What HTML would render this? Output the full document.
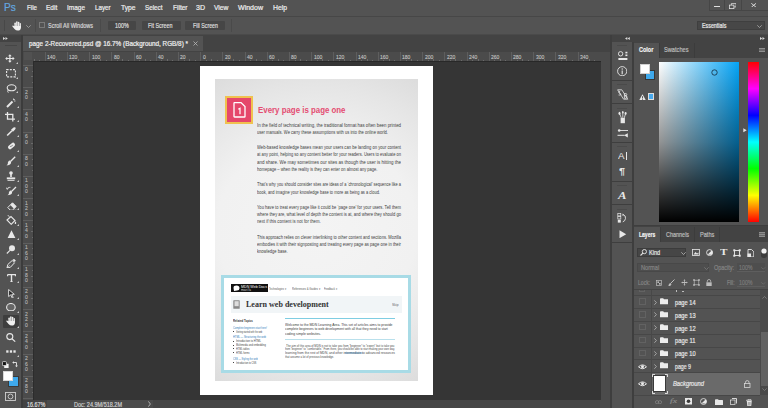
<!DOCTYPE html>
<html><head><meta charset="utf-8"><style>
html,body{margin:0;padding:0;width:768px;height:408px;overflow:hidden;background:#535353;}
body{position:relative;font-family:"Liberation Sans",sans-serif;}
div,span,svg{position:absolute;}
.t{white-space:nowrap;line-height:1;-webkit-text-stroke:0.2px currentColor;}
</style></head><body>

<div style="left:0.00px;top:0.00px;width:768.00px;height:15.50px;background:#535353;"></div>
<div style="left:0.00px;top:16.00px;width:768.00px;height:1.00px;background:#474747;"></div>
<span class="t" style="left:4.20px;top:2.12px;font-size:11.20px;color:#64a8e0;font-family:'Liberation Sans',sans-serif;transform:scaleX(0.9033);transform-origin:0 0;letter-spacing:0;">Ps</span>
<span class="t" style="left:26.80px;top:4.47px;font-size:7.00px;color:#eeeeee;font-family:'Liberation Sans',sans-serif;transform:scaleX(0.8864);transform-origin:0 0;">File</span>
<span class="t" style="left:46.30px;top:4.47px;font-size:7.00px;color:#eeeeee;font-family:'Liberation Sans',sans-serif;transform:scaleX(0.9285);transform-origin:0 0;">Edit</span>
<span class="t" style="left:67.00px;top:4.47px;font-size:7.00px;color:#eeeeee;font-family:'Liberation Sans',sans-serif;transform:scaleX(0.9246);transform-origin:0 0;">Image</span>
<span class="t" style="left:95.00px;top:4.47px;font-size:7.00px;color:#eeeeee;font-family:'Liberation Sans',sans-serif;transform:scaleX(0.8963);transform-origin:0 0;">Layer</span>
<span class="t" style="left:120.50px;top:4.47px;font-size:7.00px;color:#eeeeee;font-family:'Liberation Sans',sans-serif;transform:scaleX(0.9547);transform-origin:0 0;">Type</span>
<span class="t" style="left:144.50px;top:4.47px;font-size:7.00px;color:#eeeeee;font-family:'Liberation Sans',sans-serif;transform:scaleX(0.8989);transform-origin:0 0;">Select</span>
<span class="t" style="left:172.50px;top:4.47px;font-size:7.00px;color:#eeeeee;font-family:'Liberation Sans',sans-serif;transform:scaleX(0.9317);transform-origin:0 0;">Filter</span>
<span class="t" style="left:196.00px;top:4.47px;font-size:7.00px;color:#eeeeee;font-family:'Liberation Sans',sans-serif;transform:scaleX(1.0052);transform-origin:0 0;">3D</span>
<span class="t" style="left:214.00px;top:4.47px;font-size:7.00px;color:#eeeeee;font-family:'Liberation Sans',sans-serif;transform:scaleX(0.9570);transform-origin:0 0;">View</span>
<span class="t" style="left:238.40px;top:4.47px;font-size:7.00px;color:#eeeeee;font-family:'Liberation Sans',sans-serif;transform:scaleX(1.0038);transform-origin:0 0;">Window</span>
<span class="t" style="left:272.80px;top:4.47px;font-size:7.00px;color:#eeeeee;font-family:'Liberation Sans',sans-serif;transform:scaleX(0.9787);transform-origin:0 0;">Help</span>
<div style="left:709.00px;top:0.00px;width:0.80px;height:10.50px;background:#464646;"></div>
<div style="left:724.00px;top:0.00px;width:0.80px;height:10.50px;background:#464646;"></div>
<div style="left:741.00px;top:0.00px;width:0.80px;height:10.50px;background:#464646;"></div>
<div style="left:709.00px;top:10.20px;width:59.00px;height:0.80px;background:#464646;"></div>
<div style="left:713.80px;top:6.20px;width:6.20px;height:1.20px;background:#e0e0e0;"></div>
<svg style="left:728.7px;top:3px" width="7.5" height="6" viewBox="0 0 7.5 6"><rect x="0.4" y="2.1" width="4.5" height="3.5" fill="none" stroke="#e0e0e0" stroke-width="0.8"/><path d="M2.4 2.1V0.4H7.1V3.9H4.9" fill="none" stroke="#e0e0e0" stroke-width="0.8"/></svg>
<svg style="left:750.8px;top:2.8px" width="5.4" height="4.6" viewBox="0 0 5.4 4.6"><path d="M0.3 0.3L5.1 4.3M5.1 0.3L0.3 4.3" stroke="#e6e6e6" stroke-width="0.9"/></svg>
<div style="left:0.00px;top:17.00px;width:768.00px;height:17.30px;background:#535353;"></div>
<div style="left:0.00px;top:34.30px;width:768.00px;height:0.70px;background:#4a4a4a;"></div>
<div style="left:3.50px;top:20.00px;width:1.20px;height:11.00px;background:#484848;"></div>
<svg style="left:12px;top:21px" width="10" height="10" viewBox="0 0 10 10"><rect x="2.4" y="1.6" width="1.5" height="6" rx="0.75" fill="#f0f0f0"/><rect x="4.1" y="0.3" width="1.5" height="6" rx="0.75" fill="#f0f0f0"/><rect x="5.8" y="0.8" width="1.5" height="6" rx="0.75" fill="#f0f0f0"/><rect x="7.5" y="2" width="1.4" height="5" rx="0.7" fill="#f0f0f0"/><path d="M2.4 5H8.9V6.8Q8.9 9.6 5.8 9.6Q3.8 9.6 2.8 8.2L0.4 5.4Q0.1 4.6 0.9 4.5Q1.4 4.5 2.4 5.6Z" fill="#f0f0f0"/><path d="M3.95 2.5V5M5.65 1.5V5M7.35 2.5V5" stroke="#9a9a9a" stroke-width="0.25"/></svg>
<svg style="left:25.8px;top:25px" width="5" height="3" viewBox="0 0 5 3"><path d="M0.3 0.3L2.5 2.5L4.7 0.3" fill="none" stroke="#a8a8a8" stroke-width="0.8"/></svg>
<div style="left:35.20px;top:19.00px;width:0.80px;height:13.00px;background:#4a4a4a;"></div>
<div style="left:38.80px;top:22.40px;width:6.30px;height:6.10px;background:transparent;border:1px solid #7a7a7a;box-sizing:border-box;"></div>
<span class="t" style="left:48.00px;top:23.26px;font-size:6.90px;color:#d6d6d6;font-family:'Liberation Sans',sans-serif;transform:scaleX(0.7993);transform-origin:0 0;">Scroll All Windows</span>
<div style="left:100.00px;top:19.00px;width:0.80px;height:13.00px;background:#4a4a4a;"></div>
<div style="left:230.70px;top:19.00px;width:0.80px;height:13.00px;background:#4a4a4a;"></div>
<div style="left:107.80px;top:21.00px;width:28.40px;height:9.40px;background:#464646;border-radius:1px;"></div>
<span class="t" style="left:115.00px;top:23.31px;font-size:6.60px;color:#dedede;font-family:'Liberation Sans',sans-serif;transform:scaleX(0.8178);transform-origin:0 0;">100%</span>
<div style="left:142.00px;top:21.00px;width:38.50px;height:9.40px;background:#464646;border-radius:1px;"></div>
<span class="t" style="left:148.30px;top:23.31px;font-size:6.60px;color:#dedede;font-family:'Liberation Sans',sans-serif;transform:scaleX(0.8183);transform-origin:0 0;">Fit Screen</span>
<div style="left:185.30px;top:21.00px;width:40.00px;height:9.40px;background:#464646;border-radius:1px;"></div>
<span class="t" style="left:193.00px;top:23.31px;font-size:6.60px;color:#dedede;font-family:'Liberation Sans',sans-serif;transform:scaleX(0.8024);transform-origin:0 0;">Fill Screen</span>
<div style="left:697.00px;top:21.00px;width:67.50px;height:9.20px;background:#474747;border:0.8px solid #3f3f3f;box-sizing:border-box;"></div>
<span class="t" style="left:701.70px;top:22.27px;font-size:7.00px;color:#ececec;font-family:'Liberation Sans',sans-serif;transform:scaleX(0.7616);transform-origin:0 0;">Essentials</span>
<svg style="left:757px;top:24.5px" width="5" height="3" viewBox="0 0 5 3"><path d="M0.3 0.3L2.5 2.5L4.7 0.3" fill="none" stroke="#b0b0b0" stroke-width="0.8"/></svg>
<div style="left:0.00px;top:35.00px;width:21.30px;height:373.00px;background:#535353;"></div>
<div style="left:0.00px;top:35.00px;width:21.30px;height:6.80px;background:#434343;"></div>
<svg style="left:3.00px;top:37.20px" width="4.8" height="2.9" viewBox="0 0 4.8 2.9"><path d="M0 0V2.9L2.3 1.45Z M2.5 0V2.9L4.8 1.45Z" fill="#d8d8d8"/></svg>
<div style="left:4.50px;top:44.80px;width:12.00px;height:0.80px;background:#464646;"></div>
<div style="left:21.30px;top:35.00px;width:1.70px;height:373.00px;background:#3c3c3c;"></div>
<svg style="left:5.40px;top:54.30px" width="9.8" height="9" viewBox="0 0 9.8 9"><path d="M4.9 0.2L6.7 2.2H5.5V3.9H7.6V2.7L9.6 4.5L7.6 6.3V5.1H5.5V6.8H6.7L4.9 8.8L3.1 6.8H4.3V5.1H2.2V6.3L0.2 4.5L2.2 2.7V3.9H4.3V2.2H3.1Z" fill="#e8e8e8"/></svg>
<svg style="left:16.00px;top:62.00px" width="2" height="2" viewBox="0 0 2 2"><path d="M2 0V2H0Z" fill="#c8c8c8"/></svg>
<svg style="left:6.00px;top:69.00px" width="10" height="8.5" viewBox="0 0 10 8.5"><rect x="0.6" y="0.6" width="8.8" height="7.3" fill="none" stroke="#e8e8e8" stroke-width="1.1" stroke-dasharray="2 1.2"/></svg>
<svg style="left:16.00px;top:76.50px" width="2" height="2" viewBox="0 0 2 2"><path d="M2 0V2H0Z" fill="#c8c8c8"/></svg>
<svg style="left:6.00px;top:83.50px" width="10.5" height="9" viewBox="0 0 10.5 9"><ellipse cx="5.6" cy="3.8" rx="4.4" ry="3" fill="none" stroke="#e8e8e8" stroke-width="1.1"/><path d="M2.2 6 Q1.2 7.5 2.3 8.6" fill="none" stroke="#e8e8e8" stroke-width="1"/></svg>
<svg style="left:16.00px;top:91.00px" width="2" height="2" viewBox="0 0 2 2"><path d="M2 0V2H0Z" fill="#c8c8c8"/></svg>
<svg style="left:6.00px;top:97.80px" width="10" height="10" viewBox="0 0 10 10"><path d="M1 9L6.5 3.5" stroke="#e8e8e8" stroke-width="2"/><path d="M7.5 0.5V2M8.8 1.2L7.8 2.2M9.5 3H8" stroke="#e8e8e8" stroke-width="0.8"/></svg>
<svg style="left:16.50px;top:105.50px" width="2" height="2" viewBox="0 0 2 2"><path d="M2 0V2H0Z" fill="#c8c8c8"/></svg>
<svg style="left:5.00px;top:112.00px" width="10.5" height="9.5" viewBox="0 0 10.5 9.5"><path d="M2.5 0V7.2H10M0 2.3H7.8V9.5" fill="none" stroke="#e8e8e8" stroke-width="1.3"/></svg>
<svg style="left:16.50px;top:120.00px" width="2" height="2" viewBox="0 0 2 2"><path d="M2 0V2H0Z" fill="#c8c8c8"/></svg>
<svg style="left:6.00px;top:127.00px" width="10" height="9.5" viewBox="0 0 10 9.5"><path d="M1.2 8.5L6 3.7" stroke="#e8e8e8" stroke-width="1.6"/><path d="M5 2.7L7.5 0.6Q8.8 -0.2 9.4 0.6Q10 1.3 9.1 2.4L7 4.8Z" fill="#e8e8e8"/></svg>
<svg style="left:16.50px;top:135.00px" width="2" height="2" viewBox="0 0 2 2"><path d="M2 0V2H0Z" fill="#c8c8c8"/></svg>
<svg style="left:5.80px;top:141.00px" width="10.5" height="10" viewBox="0 0 10.5 10"><rect x="1.5" y="3" width="8" height="4" rx="2" transform="rotate(-40 5.5 5)" fill="#e8e8e8"/><circle cx="5.5" cy="5" r="0.6" fill="#777"/><circle cx="4.5" cy="5.5" r="0.5" fill="#777"/><circle cx="6.4" cy="4.3" r="0.5" fill="#777"/></svg>
<svg style="left:17.00px;top:150.00px" width="2" height="2" viewBox="0 0 2 2"><path d="M2 0V2H0Z" fill="#c8c8c8"/></svg>
<svg style="left:6.00px;top:156.00px" width="10" height="10" viewBox="0 0 10 10"><path d="M4.5 5.5L9.2 0.8" stroke="#e8e8e8" stroke-width="1.3"/><path d="M4.8 5.2Q3.6 4 2.5 5.2Q1.6 6.3 1.8 8 Q0.8 9.2 0.6 9.5Q3.5 9.3 4.5 8Q5.6 6.6 4.8 5.2Z" fill="#e8e8e8"/></svg>
<svg style="left:17.00px;top:165.00px" width="2" height="2" viewBox="0 0 2 2"><path d="M2 0V2H0Z" fill="#c8c8c8"/></svg>
<svg style="left:6.00px;top:170.80px" width="10" height="10" viewBox="0 0 10 10"><circle cx="5" cy="2" r="1.8" fill="#e8e8e8"/><rect x="4.2" y="3" width="1.6" height="3" fill="#e8e8e8"/><path d="M0.8 6.4H9.2V8.2H0.8Z" fill="#e8e8e8"/><rect x="1.5" y="8.8" width="7" height="1" fill="#e8e8e8"/></svg>
<svg style="left:17.00px;top:179.50px" width="2" height="2" viewBox="0 0 2 2"><path d="M2 0V2H0Z" fill="#c8c8c8"/></svg>
<svg style="left:5.50px;top:186.00px" width="11" height="9.5" viewBox="0 0 11 9.5"><path d="M5.5 5.5L10 1" stroke="#e8e8e8" stroke-width="1.3"/><path d="M5.8 5.2Q4.6 4 3.5 5.2Q2.6 6.3 2.8 8 Q1.8 9 1.6 9.3Q4.5 9.1 5.5 8Q6.6 6.6 5.8 5.2Z" fill="#e8e8e8"/><path d="M0.8 3Q2 0.8 4.5 1.3" fill="none" stroke="#e8e8e8" stroke-width="0.8"/><path d="M0.3 1.5L1 3.4L2.6 2.4" fill="none" stroke="#e8e8e8" stroke-width="0.7"/></svg>
<svg style="left:17.00px;top:193.50px" width="2" height="2" viewBox="0 0 2 2"><path d="M2 0V2H0Z" fill="#c8c8c8"/></svg>
<svg style="left:6.50px;top:201.50px" width="10" height="8.5" viewBox="0 0 10 8.5"><path d="M0.8 5.5L5.5 0.8L9.2 4.5L5.4 8.2H3.3Z" fill="none" stroke="#e8e8e8" stroke-width="1"/><path d="M3.2 3.2L7 7" stroke="#e8e8e8" stroke-width="0"/><path d="M3.3 3L5.5 0.8L9.2 4.5L7 6.7Z" fill="#e8e8e8"/><path d="M5.4 8.2H9.5" stroke="#e8e8e8" stroke-width="0.7"/></svg>
<svg style="left:17.00px;top:208.00px" width="2" height="2" viewBox="0 0 2 2"><path d="M2 0V2H0Z" fill="#c8c8c8"/></svg>
<svg style="left:5.50px;top:214.50px" width="11.5" height="10.5" viewBox="0 0 11.5 10.5"><path d="M1 5L5 1.5L9 5.5L5.2 9.3Z" fill="none" stroke="#e8e8e8" stroke-width="1.1"/><path d="M3.5 1.5L1.6 0.3" stroke="#e8e8e8" stroke-width="0.9"/><path d="M9.5 6.2Q10.8 8 10 8.8Q9.2 9.5 8.7 8.5Q8.5 7.5 9.5 6.2Z" fill="#e8e8e8"/></svg>
<svg style="left:17.00px;top:223.50px" width="2" height="2" viewBox="0 0 2 2"><path d="M2 0V2H0Z" fill="#c8c8c8"/></svg>
<svg style="left:6.50px;top:229.80px" width="9" height="8.5" viewBox="0 0 9 8.5"><path d="M4.5 0.3L8.5 8.2H0.5Z" fill="#e8e8e8"/></svg>
<svg style="left:17.00px;top:237.50px" width="2" height="2" viewBox="0 0 2 2"><path d="M2 0V2H0Z" fill="#c8c8c8"/></svg>
<svg style="left:6.00px;top:244.50px" width="10" height="9" viewBox="0 0 10 9"><circle cx="6" cy="3.2" r="3" fill="#e8e8e8"/><path d="M4 5.3L0.8 8.5" stroke="#e8e8e8" stroke-width="1.1"/></svg>
<svg style="left:17.00px;top:252.50px" width="2" height="2" viewBox="0 0 2 2"><path d="M2 0V2H0Z" fill="#c8c8c8"/></svg>
<svg style="left:6.00px;top:258.80px" width="10" height="9.5" viewBox="0 0 10 9.5"><path d="M1 9L1.8 5.5L6.2 1.5L8.5 3.8L4.5 8.2Z" fill="none" stroke="#e8e8e8" stroke-width="1"/><path d="M6.5 1L8 -0.2L9.8 1.6L8.8 3" fill="#e8e8e8"/><path d="M1 9L3.8 6.3" stroke="#e8e8e8" stroke-width="0.6"/></svg>
<svg style="left:17.00px;top:267.00px" width="2" height="2" viewBox="0 0 2 2"><path d="M2 0V2H0Z" fill="#c8c8c8"/></svg>
<svg style="left:6.50px;top:273.50px" width="9" height="8.5" viewBox="0 0 9 8.5"><path d="M0.6 0.6H8.4V2.2" fill="none" stroke="#e8e8e8" stroke-width="1.1"/><path d="M0.6 2.2V0.6" stroke="#e8e8e8" stroke-width="1.1"/><path d="M4.5 0.6V8" stroke="#e8e8e8" stroke-width="1.4"/><path d="M3 8H6" stroke="#e8e8e8" stroke-width="0.9"/></svg>
<svg style="left:17.00px;top:281.00px" width="2" height="2" viewBox="0 0 2 2"><path d="M2 0V2H0Z" fill="#c8c8c8"/></svg>
<svg style="left:8.00px;top:288.50px" width="7" height="9.5" viewBox="0 0 7 9.5"><path d="M0.6 0.5L6.3 5.3H3.8L5.2 8.6L4.2 9L2.8 5.8L0.6 7.6Z" fill="#2a2a2a" stroke="#e8e8e8" stroke-width="0.9"/></svg>
<svg style="left:17.00px;top:296.50px" width="2" height="2" viewBox="0 0 2 2"><path d="M2 0V2H0Z" fill="#c8c8c8"/></svg>
<svg style="left:5.80px;top:302.80px" width="9.8" height="8.4" viewBox="0 0 9.8 8.4"><ellipse cx="4.9" cy="4.2" rx="4.3" ry="3.7" fill="#666" stroke="#e8e8e8" stroke-width="1.1"/></svg>
<svg style="left:17.00px;top:310.80px" width="2" height="2" viewBox="0 0 2 2"><path d="M2 0V2H0Z" fill="#c8c8c8"/></svg>
<div style="left:2.50px;top:314.80px;width:16.50px;height:13.20px;background:#3e3e3e;border-radius:1px;"></div>
<svg style="left:5.80px;top:316.20px" width="10" height="10" viewBox="0 0 10 10"><rect x="2.4" y="1.6" width="1.5" height="6" rx="0.75" fill="#f0f0f0"/><rect x="4.1" y="0.3" width="1.5" height="6" rx="0.75" fill="#f0f0f0"/><rect x="5.8" y="0.8" width="1.5" height="6" rx="0.75" fill="#f0f0f0"/><rect x="7.5" y="2" width="1.4" height="5" rx="0.7" fill="#f0f0f0"/><path d="M2.4 5H8.9V6.8Q8.9 9.6 5.8 9.6Q3.8 9.6 2.8 8.2L0.4 5.4Q0.1 4.6 0.9 4.5Q1.4 4.5 2.4 5.6Z" fill="#f0f0f0"/><path d="M3.95 2.5V5M5.65 1.5V5M7.35 2.5V5" stroke="#9a9a9a" stroke-width="0.25"/></svg>
<svg style="left:17.00px;top:325.50px" width="2" height="2" viewBox="0 0 2 2"><path d="M2 0V2H0Z" fill="#c8c8c8"/></svg>
<svg style="left:5.80px;top:332.80px" width="10" height="9" viewBox="0 0 10 9"><circle cx="3.8" cy="3.6" r="3" fill="none" stroke="#e8e8e8" stroke-width="1.1"/><path d="M6 5.8L9.2 8.6" stroke="#e8e8e8" stroke-width="1.2"/></svg>
<svg style="left:6.00px;top:349.60px" width="10" height="3.2" viewBox="0 0 10 3.2"><rect x="0.2" y="0.3" width="2.3" height="2.4" fill="#e8e8e8"/><rect x="3.8" y="0.3" width="2.3" height="2.4" fill="#e8e8e8"/><rect x="7.4" y="0.3" width="2.3" height="2.4" fill="#e8e8e8"/></svg>
<svg style="left:17.00px;top:354.50px" width="2" height="2" viewBox="0 0 2 2"><path d="M2 0V2H0Z" fill="#c8c8c8"/></svg>
<svg style="left:1.80px;top:360.80px" width="7" height="7.5" viewBox="0 0 7 7.5"><rect x="2.2" y="2.8" width="4.4" height="4.4" fill="#f2f2f2"/><rect x="0.4" y="0.6" width="4" height="4" rx="0.8" fill="#111" stroke="#e8e8e8" stroke-width="0.8"/></svg>
<svg style="left:12.00px;top:360.80px" width="7" height="7" viewBox="0 0 7 7"><path d="M1.6 1.5H4.5V4.8" fill="none" stroke="#e8e8e8" stroke-width="0.9"/><path d="M0.2 1.5L2 0.2V2.8Z" fill="#e8e8e8"/><path d="M3.1 4.4H5.9L4.5 6.3Z" fill="#e8e8e8"/></svg>
<div style="left:8.00px;top:376.20px;width:11.00px;height:10.40px;background:#3fa9ec;border:0.7px solid #3a3a3a;box-sizing:border-box;"></div>
<div style="left:2.70px;top:370.70px;width:10.50px;height:10.40px;background:#ffffff;border:0.5px solid #d8d8d8;box-sizing:border-box;"></div>
<svg style="left:5.00px;top:391.50px" width="11" height="9" viewBox="0 0 11 9"><rect x="0.5" y="0.5" width="10" height="8" fill="none" stroke="#cfcfcf" stroke-width="0.9"/><circle cx="5.5" cy="4.5" r="2.4" fill="none" stroke="#cfcfcf" stroke-width="0.9"/></svg>
<div style="left:23.00px;top:35.00px;width:588.00px;height:16.80px;background:#434343;"></div>
<div style="left:23.00px;top:35.90px;width:179.70px;height:14.70px;background:#535353;"></div>
<span class="t" style="left:28.80px;top:41.36px;font-size:6.90px;color:#f0f0f0;font-family:'Liberation Sans',sans-serif;transform:scaleX(0.9219);transform-origin:0 0;">page 2-Recovered.psd @ 16.7% (Background, RGB/8) *</span>
<svg style="left:192.6px;top:41px" width="5" height="5" viewBox="0 0 5 5"><path d="M0.5 0.5L4.5 4.5M4.5 0.5L0.5 4.5" stroke="#b8b8b8" stroke-width="0.8"/></svg>
<div style="left:23.00px;top:51.80px;width:577.50px;height:9.00px;background:#4b4b4b;"></div>
<div style="left:23.00px;top:60.80px;width:9.60px;height:339.00px;background:#4b4b4b;"></div>
<div style="left:23.60px;top:52.40px;width:8.60px;height:8.00px;background:#515151;"></div>
<div style="left:33.00px;top:61.00px;width:567.50px;height:338.50px;background:#353535;"></div>
<div style="left:32.60px;top:60.60px;width:568.00px;height:0.90px;background:#282828;"></div>
<div style="left:32.60px;top:60.60px;width:0.90px;height:339.00px;background:#2c2c2c;"></div>
<div style="left:44.70px;top:51.80px;width:0.80px;height:9.00px;background:#5e5e5e;"></div>
<span class="t" style="left:47.10px;top:54.80px;font-size:10.40px;color:#c4c4c4;font-family:'Liberation Sans',sans-serif;transform:scale(0.4843,0.5000);transform-origin:0 0;">140</span>
<div style="left:66.90px;top:51.80px;width:0.80px;height:9.00px;background:#5e5e5e;"></div>
<span class="t" style="left:69.30px;top:54.80px;font-size:10.40px;color:#c4c4c4;font-family:'Liberation Sans',sans-serif;transform:scale(0.4843,0.5000);transform-origin:0 0;">120</span>
<div style="left:89.10px;top:51.80px;width:0.80px;height:9.00px;background:#5e5e5e;"></div>
<span class="t" style="left:91.50px;top:54.80px;font-size:10.40px;color:#c4c4c4;font-family:'Liberation Sans',sans-serif;transform:scale(0.4843,0.5000);transform-origin:0 0;">100</span>
<div style="left:111.30px;top:51.80px;width:0.80px;height:9.00px;background:#5e5e5e;"></div>
<span class="t" style="left:113.70px;top:54.80px;font-size:10.40px;color:#c4c4c4;font-family:'Liberation Sans',sans-serif;transform:scale(0.4843,0.5000);transform-origin:0 0;">80</span>
<div style="left:133.50px;top:51.80px;width:0.80px;height:9.00px;background:#5e5e5e;"></div>
<span class="t" style="left:135.90px;top:54.80px;font-size:10.40px;color:#c4c4c4;font-family:'Liberation Sans',sans-serif;transform:scale(0.4843,0.5000);transform-origin:0 0;">60</span>
<div style="left:155.70px;top:51.80px;width:0.80px;height:9.00px;background:#5e5e5e;"></div>
<span class="t" style="left:158.10px;top:54.80px;font-size:10.40px;color:#c4c4c4;font-family:'Liberation Sans',sans-serif;transform:scale(0.4843,0.5000);transform-origin:0 0;">40</span>
<div style="left:177.90px;top:51.80px;width:0.80px;height:9.00px;background:#5e5e5e;"></div>
<span class="t" style="left:180.30px;top:54.80px;font-size:10.40px;color:#c4c4c4;font-family:'Liberation Sans',sans-serif;transform:scale(0.4843,0.5000);transform-origin:0 0;">20</span>
<div style="left:200.10px;top:51.80px;width:0.80px;height:9.00px;background:#5e5e5e;"></div>
<span class="t" style="left:202.50px;top:54.80px;font-size:10.40px;color:#c4c4c4;font-family:'Liberation Sans',sans-serif;transform:scale(0.4843,0.5000);transform-origin:0 0;">0</span>
<div style="left:222.30px;top:51.80px;width:0.80px;height:9.00px;background:#5e5e5e;"></div>
<span class="t" style="left:224.70px;top:54.80px;font-size:10.40px;color:#c4c4c4;font-family:'Liberation Sans',sans-serif;transform:scale(0.4843,0.5000);transform-origin:0 0;">20</span>
<div style="left:244.50px;top:51.80px;width:0.80px;height:9.00px;background:#5e5e5e;"></div>
<span class="t" style="left:246.90px;top:54.80px;font-size:10.40px;color:#c4c4c4;font-family:'Liberation Sans',sans-serif;transform:scale(0.4843,0.5000);transform-origin:0 0;">40</span>
<div style="left:266.70px;top:51.80px;width:0.80px;height:9.00px;background:#5e5e5e;"></div>
<span class="t" style="left:269.10px;top:54.80px;font-size:10.40px;color:#c4c4c4;font-family:'Liberation Sans',sans-serif;transform:scale(0.4843,0.5000);transform-origin:0 0;">60</span>
<div style="left:288.90px;top:51.80px;width:0.80px;height:9.00px;background:#5e5e5e;"></div>
<span class="t" style="left:291.30px;top:54.80px;font-size:10.40px;color:#c4c4c4;font-family:'Liberation Sans',sans-serif;transform:scale(0.4843,0.5000);transform-origin:0 0;">80</span>
<div style="left:311.10px;top:51.80px;width:0.80px;height:9.00px;background:#5e5e5e;"></div>
<span class="t" style="left:313.50px;top:54.80px;font-size:10.40px;color:#c4c4c4;font-family:'Liberation Sans',sans-serif;transform:scale(0.4843,0.5000);transform-origin:0 0;">100</span>
<div style="left:333.30px;top:51.80px;width:0.80px;height:9.00px;background:#5e5e5e;"></div>
<span class="t" style="left:335.70px;top:54.80px;font-size:10.40px;color:#c4c4c4;font-family:'Liberation Sans',sans-serif;transform:scale(0.4843,0.5000);transform-origin:0 0;">120</span>
<div style="left:355.50px;top:51.80px;width:0.80px;height:9.00px;background:#5e5e5e;"></div>
<span class="t" style="left:357.90px;top:54.80px;font-size:10.40px;color:#c4c4c4;font-family:'Liberation Sans',sans-serif;transform:scale(0.4843,0.5000);transform-origin:0 0;">140</span>
<div style="left:377.70px;top:51.80px;width:0.80px;height:9.00px;background:#5e5e5e;"></div>
<span class="t" style="left:380.10px;top:54.80px;font-size:10.40px;color:#c4c4c4;font-family:'Liberation Sans',sans-serif;transform:scale(0.4843,0.5000);transform-origin:0 0;">160</span>
<div style="left:399.90px;top:51.80px;width:0.80px;height:9.00px;background:#5e5e5e;"></div>
<span class="t" style="left:402.30px;top:54.80px;font-size:10.40px;color:#c4c4c4;font-family:'Liberation Sans',sans-serif;transform:scale(0.4843,0.5000);transform-origin:0 0;">180</span>
<div style="left:422.10px;top:51.80px;width:0.80px;height:9.00px;background:#5e5e5e;"></div>
<span class="t" style="left:424.50px;top:54.80px;font-size:10.40px;color:#c4c4c4;font-family:'Liberation Sans',sans-serif;transform:scale(0.4843,0.5000);transform-origin:0 0;">200</span>
<div style="left:444.30px;top:51.80px;width:0.80px;height:9.00px;background:#5e5e5e;"></div>
<span class="t" style="left:446.70px;top:54.80px;font-size:10.40px;color:#c4c4c4;font-family:'Liberation Sans',sans-serif;transform:scale(0.4843,0.5000);transform-origin:0 0;">220</span>
<div style="left:466.50px;top:51.80px;width:0.80px;height:9.00px;background:#5e5e5e;"></div>
<span class="t" style="left:468.90px;top:54.80px;font-size:10.40px;color:#c4c4c4;font-family:'Liberation Sans',sans-serif;transform:scale(0.4843,0.5000);transform-origin:0 0;">240</span>
<div style="left:488.70px;top:51.80px;width:0.80px;height:9.00px;background:#5e5e5e;"></div>
<span class="t" style="left:491.10px;top:54.80px;font-size:10.40px;color:#c4c4c4;font-family:'Liberation Sans',sans-serif;transform:scale(0.4843,0.5000);transform-origin:0 0;">260</span>
<div style="left:510.90px;top:51.80px;width:0.80px;height:9.00px;background:#5e5e5e;"></div>
<span class="t" style="left:513.30px;top:54.80px;font-size:10.40px;color:#c4c4c4;font-family:'Liberation Sans',sans-serif;transform:scale(0.4843,0.5000);transform-origin:0 0;">280</span>
<div style="left:533.10px;top:51.80px;width:0.80px;height:9.00px;background:#5e5e5e;"></div>
<span class="t" style="left:535.50px;top:54.80px;font-size:10.40px;color:#c4c4c4;font-family:'Liberation Sans',sans-serif;transform:scale(0.4843,0.5000);transform-origin:0 0;">300</span>
<div style="left:555.30px;top:51.80px;width:0.80px;height:9.00px;background:#5e5e5e;"></div>
<span class="t" style="left:557.70px;top:54.80px;font-size:10.40px;color:#c4c4c4;font-family:'Liberation Sans',sans-serif;transform:scale(0.4843,0.5000);transform-origin:0 0;">320</span>
<div style="left:577.50px;top:51.80px;width:0.80px;height:9.00px;background:#5e5e5e;"></div>
<span class="t" style="left:579.90px;top:54.80px;font-size:10.40px;color:#c4c4c4;font-family:'Liberation Sans',sans-serif;transform:scale(0.4843,0.5000);transform-origin:0 0;">340</span>
<div style="left:33.65px;top:59.10px;width:0.70px;height:1.60px;background:#6a6a6a;"></div>
<div style="left:39.20px;top:59.60px;width:0.70px;height:1.10px;background:#6a6a6a;"></div>
<div style="left:50.30px;top:59.60px;width:0.70px;height:1.10px;background:#6a6a6a;"></div>
<div style="left:55.85px;top:59.10px;width:0.70px;height:1.60px;background:#6a6a6a;"></div>
<div style="left:61.40px;top:59.60px;width:0.70px;height:1.10px;background:#6a6a6a;"></div>
<div style="left:72.50px;top:59.60px;width:0.70px;height:1.10px;background:#6a6a6a;"></div>
<div style="left:78.05px;top:59.10px;width:0.70px;height:1.60px;background:#6a6a6a;"></div>
<div style="left:83.60px;top:59.60px;width:0.70px;height:1.10px;background:#6a6a6a;"></div>
<div style="left:94.70px;top:59.60px;width:0.70px;height:1.10px;background:#6a6a6a;"></div>
<div style="left:100.25px;top:59.10px;width:0.70px;height:1.60px;background:#6a6a6a;"></div>
<div style="left:105.80px;top:59.60px;width:0.70px;height:1.10px;background:#6a6a6a;"></div>
<div style="left:116.90px;top:59.60px;width:0.70px;height:1.10px;background:#6a6a6a;"></div>
<div style="left:122.45px;top:59.10px;width:0.70px;height:1.60px;background:#6a6a6a;"></div>
<div style="left:128.00px;top:59.60px;width:0.70px;height:1.10px;background:#6a6a6a;"></div>
<div style="left:139.10px;top:59.60px;width:0.70px;height:1.10px;background:#6a6a6a;"></div>
<div style="left:144.65px;top:59.10px;width:0.70px;height:1.60px;background:#6a6a6a;"></div>
<div style="left:150.20px;top:59.60px;width:0.70px;height:1.10px;background:#6a6a6a;"></div>
<div style="left:161.30px;top:59.60px;width:0.70px;height:1.10px;background:#6a6a6a;"></div>
<div style="left:166.85px;top:59.10px;width:0.70px;height:1.60px;background:#6a6a6a;"></div>
<div style="left:172.40px;top:59.60px;width:0.70px;height:1.10px;background:#6a6a6a;"></div>
<div style="left:183.50px;top:59.60px;width:0.70px;height:1.10px;background:#6a6a6a;"></div>
<div style="left:189.05px;top:59.10px;width:0.70px;height:1.60px;background:#6a6a6a;"></div>
<div style="left:194.60px;top:59.60px;width:0.70px;height:1.10px;background:#6a6a6a;"></div>
<div style="left:205.70px;top:59.60px;width:0.70px;height:1.10px;background:#6a6a6a;"></div>
<div style="left:211.25px;top:59.10px;width:0.70px;height:1.60px;background:#6a6a6a;"></div>
<div style="left:216.80px;top:59.60px;width:0.70px;height:1.10px;background:#6a6a6a;"></div>
<div style="left:227.90px;top:59.60px;width:0.70px;height:1.10px;background:#6a6a6a;"></div>
<div style="left:233.45px;top:59.10px;width:0.70px;height:1.60px;background:#6a6a6a;"></div>
<div style="left:239.00px;top:59.60px;width:0.70px;height:1.10px;background:#6a6a6a;"></div>
<div style="left:250.10px;top:59.60px;width:0.70px;height:1.10px;background:#6a6a6a;"></div>
<div style="left:255.65px;top:59.10px;width:0.70px;height:1.60px;background:#6a6a6a;"></div>
<div style="left:261.20px;top:59.60px;width:0.70px;height:1.10px;background:#6a6a6a;"></div>
<div style="left:272.30px;top:59.60px;width:0.70px;height:1.10px;background:#6a6a6a;"></div>
<div style="left:277.85px;top:59.10px;width:0.70px;height:1.60px;background:#6a6a6a;"></div>
<div style="left:283.40px;top:59.60px;width:0.70px;height:1.10px;background:#6a6a6a;"></div>
<div style="left:294.50px;top:59.60px;width:0.70px;height:1.10px;background:#6a6a6a;"></div>
<div style="left:300.05px;top:59.10px;width:0.70px;height:1.60px;background:#6a6a6a;"></div>
<div style="left:305.60px;top:59.60px;width:0.70px;height:1.10px;background:#6a6a6a;"></div>
<div style="left:316.70px;top:59.60px;width:0.70px;height:1.10px;background:#6a6a6a;"></div>
<div style="left:322.25px;top:59.10px;width:0.70px;height:1.60px;background:#6a6a6a;"></div>
<div style="left:327.80px;top:59.60px;width:0.70px;height:1.10px;background:#6a6a6a;"></div>
<div style="left:338.90px;top:59.60px;width:0.70px;height:1.10px;background:#6a6a6a;"></div>
<div style="left:344.45px;top:59.10px;width:0.70px;height:1.60px;background:#6a6a6a;"></div>
<div style="left:350.00px;top:59.60px;width:0.70px;height:1.10px;background:#6a6a6a;"></div>
<div style="left:361.10px;top:59.60px;width:0.70px;height:1.10px;background:#6a6a6a;"></div>
<div style="left:366.65px;top:59.10px;width:0.70px;height:1.60px;background:#6a6a6a;"></div>
<div style="left:372.20px;top:59.60px;width:0.70px;height:1.10px;background:#6a6a6a;"></div>
<div style="left:383.30px;top:59.60px;width:0.70px;height:1.10px;background:#6a6a6a;"></div>
<div style="left:388.85px;top:59.10px;width:0.70px;height:1.60px;background:#6a6a6a;"></div>
<div style="left:394.40px;top:59.60px;width:0.70px;height:1.10px;background:#6a6a6a;"></div>
<div style="left:405.50px;top:59.60px;width:0.70px;height:1.10px;background:#6a6a6a;"></div>
<div style="left:411.05px;top:59.10px;width:0.70px;height:1.60px;background:#6a6a6a;"></div>
<div style="left:416.60px;top:59.60px;width:0.70px;height:1.10px;background:#6a6a6a;"></div>
<div style="left:427.70px;top:59.60px;width:0.70px;height:1.10px;background:#6a6a6a;"></div>
<div style="left:433.25px;top:59.10px;width:0.70px;height:1.60px;background:#6a6a6a;"></div>
<div style="left:438.80px;top:59.60px;width:0.70px;height:1.10px;background:#6a6a6a;"></div>
<div style="left:449.90px;top:59.60px;width:0.70px;height:1.10px;background:#6a6a6a;"></div>
<div style="left:455.45px;top:59.10px;width:0.70px;height:1.60px;background:#6a6a6a;"></div>
<div style="left:461.00px;top:59.60px;width:0.70px;height:1.10px;background:#6a6a6a;"></div>
<div style="left:472.10px;top:59.60px;width:0.70px;height:1.10px;background:#6a6a6a;"></div>
<div style="left:477.65px;top:59.10px;width:0.70px;height:1.60px;background:#6a6a6a;"></div>
<div style="left:483.20px;top:59.60px;width:0.70px;height:1.10px;background:#6a6a6a;"></div>
<div style="left:494.30px;top:59.60px;width:0.70px;height:1.10px;background:#6a6a6a;"></div>
<div style="left:499.85px;top:59.10px;width:0.70px;height:1.60px;background:#6a6a6a;"></div>
<div style="left:505.40px;top:59.60px;width:0.70px;height:1.10px;background:#6a6a6a;"></div>
<div style="left:516.50px;top:59.60px;width:0.70px;height:1.10px;background:#6a6a6a;"></div>
<div style="left:522.05px;top:59.10px;width:0.70px;height:1.60px;background:#6a6a6a;"></div>
<div style="left:527.60px;top:59.60px;width:0.70px;height:1.10px;background:#6a6a6a;"></div>
<div style="left:538.70px;top:59.60px;width:0.70px;height:1.10px;background:#6a6a6a;"></div>
<div style="left:544.25px;top:59.10px;width:0.70px;height:1.60px;background:#6a6a6a;"></div>
<div style="left:549.80px;top:59.60px;width:0.70px;height:1.10px;background:#6a6a6a;"></div>
<div style="left:560.90px;top:59.60px;width:0.70px;height:1.10px;background:#6a6a6a;"></div>
<div style="left:566.45px;top:59.10px;width:0.70px;height:1.60px;background:#6a6a6a;"></div>
<div style="left:572.00px;top:59.60px;width:0.70px;height:1.10px;background:#6a6a6a;"></div>
<div style="left:583.10px;top:59.60px;width:0.70px;height:1.10px;background:#6a6a6a;"></div>
<div style="left:588.65px;top:59.10px;width:0.70px;height:1.60px;background:#6a6a6a;"></div>
<div style="left:594.20px;top:59.60px;width:0.70px;height:1.10px;background:#6a6a6a;"></div>
<div style="left:23.00px;top:64.90px;width:9.60px;height:0.80px;background:#5e5e5e;"></div>
<span class="t" style="left:24.60px;top:67.40px;font-size:10.40px;color:#b8b8b8;font-family:'Liberation Sans',sans-serif;transform:scale(0.4843,0.5000);transform-origin:0 0;">0</span>
<div style="left:23.00px;top:87.10px;width:9.60px;height:0.80px;background:#5e5e5e;"></div>
<span class="t" style="left:24.60px;top:89.60px;font-size:10.40px;color:#b8b8b8;font-family:'Liberation Sans',sans-serif;transform:scale(0.4843,0.5000);transform-origin:0 0;">2</span>
<span class="t" style="left:24.60px;top:95.10px;font-size:10.40px;color:#b8b8b8;font-family:'Liberation Sans',sans-serif;transform:scale(0.4843,0.5000);transform-origin:0 0;">0</span>
<div style="left:23.00px;top:109.30px;width:9.60px;height:0.80px;background:#5e5e5e;"></div>
<span class="t" style="left:24.60px;top:111.80px;font-size:10.40px;color:#b8b8b8;font-family:'Liberation Sans',sans-serif;transform:scale(0.4843,0.5000);transform-origin:0 0;">4</span>
<span class="t" style="left:24.60px;top:117.30px;font-size:10.40px;color:#b8b8b8;font-family:'Liberation Sans',sans-serif;transform:scale(0.4843,0.5000);transform-origin:0 0;">0</span>
<div style="left:23.00px;top:131.50px;width:9.60px;height:0.80px;background:#5e5e5e;"></div>
<span class="t" style="left:24.60px;top:134.00px;font-size:10.40px;color:#b8b8b8;font-family:'Liberation Sans',sans-serif;transform:scale(0.4843,0.5000);transform-origin:0 0;">6</span>
<span class="t" style="left:24.60px;top:139.50px;font-size:10.40px;color:#b8b8b8;font-family:'Liberation Sans',sans-serif;transform:scale(0.4843,0.5000);transform-origin:0 0;">0</span>
<div style="left:23.00px;top:153.70px;width:9.60px;height:0.80px;background:#5e5e5e;"></div>
<span class="t" style="left:24.60px;top:156.20px;font-size:10.40px;color:#b8b8b8;font-family:'Liberation Sans',sans-serif;transform:scale(0.4843,0.5000);transform-origin:0 0;">8</span>
<span class="t" style="left:24.60px;top:161.70px;font-size:10.40px;color:#b8b8b8;font-family:'Liberation Sans',sans-serif;transform:scale(0.4843,0.5000);transform-origin:0 0;">0</span>
<div style="left:23.00px;top:175.90px;width:9.60px;height:0.80px;background:#5e5e5e;"></div>
<span class="t" style="left:24.60px;top:178.40px;font-size:10.40px;color:#b8b8b8;font-family:'Liberation Sans',sans-serif;transform:scale(0.4843,0.5000);transform-origin:0 0;">1</span>
<span class="t" style="left:24.60px;top:183.90px;font-size:10.40px;color:#b8b8b8;font-family:'Liberation Sans',sans-serif;transform:scale(0.4843,0.5000);transform-origin:0 0;">0</span>
<span class="t" style="left:24.60px;top:189.40px;font-size:10.40px;color:#b8b8b8;font-family:'Liberation Sans',sans-serif;transform:scale(0.4843,0.5000);transform-origin:0 0;">0</span>
<div style="left:23.00px;top:198.10px;width:9.60px;height:0.80px;background:#5e5e5e;"></div>
<span class="t" style="left:24.60px;top:200.60px;font-size:10.40px;color:#b8b8b8;font-family:'Liberation Sans',sans-serif;transform:scale(0.4843,0.5000);transform-origin:0 0;">1</span>
<span class="t" style="left:24.60px;top:206.10px;font-size:10.40px;color:#b8b8b8;font-family:'Liberation Sans',sans-serif;transform:scale(0.4843,0.5000);transform-origin:0 0;">2</span>
<span class="t" style="left:24.60px;top:211.60px;font-size:10.40px;color:#b8b8b8;font-family:'Liberation Sans',sans-serif;transform:scale(0.4843,0.5000);transform-origin:0 0;">0</span>
<div style="left:23.00px;top:220.30px;width:9.60px;height:0.80px;background:#5e5e5e;"></div>
<span class="t" style="left:24.60px;top:222.80px;font-size:10.40px;color:#b8b8b8;font-family:'Liberation Sans',sans-serif;transform:scale(0.4843,0.5000);transform-origin:0 0;">1</span>
<span class="t" style="left:24.60px;top:228.30px;font-size:10.40px;color:#b8b8b8;font-family:'Liberation Sans',sans-serif;transform:scale(0.4843,0.5000);transform-origin:0 0;">4</span>
<span class="t" style="left:24.60px;top:233.80px;font-size:10.40px;color:#b8b8b8;font-family:'Liberation Sans',sans-serif;transform:scale(0.4843,0.5000);transform-origin:0 0;">0</span>
<div style="left:23.00px;top:242.50px;width:9.60px;height:0.80px;background:#5e5e5e;"></div>
<span class="t" style="left:24.60px;top:245.00px;font-size:10.40px;color:#b8b8b8;font-family:'Liberation Sans',sans-serif;transform:scale(0.4843,0.5000);transform-origin:0 0;">1</span>
<span class="t" style="left:24.60px;top:250.50px;font-size:10.40px;color:#b8b8b8;font-family:'Liberation Sans',sans-serif;transform:scale(0.4843,0.5000);transform-origin:0 0;">6</span>
<span class="t" style="left:24.60px;top:256.00px;font-size:10.40px;color:#b8b8b8;font-family:'Liberation Sans',sans-serif;transform:scale(0.4843,0.5000);transform-origin:0 0;">0</span>
<div style="left:23.00px;top:264.70px;width:9.60px;height:0.80px;background:#5e5e5e;"></div>
<span class="t" style="left:24.60px;top:267.20px;font-size:10.40px;color:#b8b8b8;font-family:'Liberation Sans',sans-serif;transform:scale(0.4843,0.5000);transform-origin:0 0;">1</span>
<span class="t" style="left:24.60px;top:272.70px;font-size:10.40px;color:#b8b8b8;font-family:'Liberation Sans',sans-serif;transform:scale(0.4843,0.5000);transform-origin:0 0;">8</span>
<span class="t" style="left:24.60px;top:278.20px;font-size:10.40px;color:#b8b8b8;font-family:'Liberation Sans',sans-serif;transform:scale(0.4843,0.5000);transform-origin:0 0;">0</span>
<div style="left:23.00px;top:286.90px;width:9.60px;height:0.80px;background:#5e5e5e;"></div>
<span class="t" style="left:24.60px;top:289.40px;font-size:10.40px;color:#b8b8b8;font-family:'Liberation Sans',sans-serif;transform:scale(0.4843,0.5000);transform-origin:0 0;">2</span>
<span class="t" style="left:24.60px;top:294.90px;font-size:10.40px;color:#b8b8b8;font-family:'Liberation Sans',sans-serif;transform:scale(0.4843,0.5000);transform-origin:0 0;">0</span>
<span class="t" style="left:24.60px;top:300.40px;font-size:10.40px;color:#b8b8b8;font-family:'Liberation Sans',sans-serif;transform:scale(0.4843,0.5000);transform-origin:0 0;">0</span>
<div style="left:23.00px;top:309.10px;width:9.60px;height:0.80px;background:#5e5e5e;"></div>
<span class="t" style="left:24.60px;top:311.60px;font-size:10.40px;color:#b8b8b8;font-family:'Liberation Sans',sans-serif;transform:scale(0.4843,0.5000);transform-origin:0 0;">2</span>
<span class="t" style="left:24.60px;top:317.10px;font-size:10.40px;color:#b8b8b8;font-family:'Liberation Sans',sans-serif;transform:scale(0.4843,0.5000);transform-origin:0 0;">2</span>
<span class="t" style="left:24.60px;top:322.60px;font-size:10.40px;color:#b8b8b8;font-family:'Liberation Sans',sans-serif;transform:scale(0.4843,0.5000);transform-origin:0 0;">0</span>
<div style="left:23.00px;top:331.30px;width:9.60px;height:0.80px;background:#5e5e5e;"></div>
<span class="t" style="left:24.60px;top:333.80px;font-size:10.40px;color:#b8b8b8;font-family:'Liberation Sans',sans-serif;transform:scale(0.4843,0.5000);transform-origin:0 0;">2</span>
<span class="t" style="left:24.60px;top:339.30px;font-size:10.40px;color:#b8b8b8;font-family:'Liberation Sans',sans-serif;transform:scale(0.4843,0.5000);transform-origin:0 0;">4</span>
<span class="t" style="left:24.60px;top:344.80px;font-size:10.40px;color:#b8b8b8;font-family:'Liberation Sans',sans-serif;transform:scale(0.4843,0.5000);transform-origin:0 0;">0</span>
<div style="left:23.00px;top:353.50px;width:9.60px;height:0.80px;background:#5e5e5e;"></div>
<span class="t" style="left:24.60px;top:356.00px;font-size:10.40px;color:#b8b8b8;font-family:'Liberation Sans',sans-serif;transform:scale(0.4843,0.5000);transform-origin:0 0;">2</span>
<span class="t" style="left:24.60px;top:361.50px;font-size:10.40px;color:#b8b8b8;font-family:'Liberation Sans',sans-serif;transform:scale(0.4843,0.5000);transform-origin:0 0;">6</span>
<span class="t" style="left:24.60px;top:367.00px;font-size:10.40px;color:#b8b8b8;font-family:'Liberation Sans',sans-serif;transform:scale(0.4843,0.5000);transform-origin:0 0;">0</span>
<div style="left:23.00px;top:375.70px;width:9.60px;height:0.80px;background:#5e5e5e;"></div>
<span class="t" style="left:24.60px;top:378.20px;font-size:10.40px;color:#b8b8b8;font-family:'Liberation Sans',sans-serif;transform:scale(0.4843,0.5000);transform-origin:0 0;">2</span>
<span class="t" style="left:24.60px;top:383.70px;font-size:10.40px;color:#b8b8b8;font-family:'Liberation Sans',sans-serif;transform:scale(0.4843,0.5000);transform-origin:0 0;">8</span>
<span class="t" style="left:24.60px;top:389.20px;font-size:10.40px;color:#b8b8b8;font-family:'Liberation Sans',sans-serif;transform:scale(0.4843,0.5000);transform-origin:0 0;">0</span>
<div style="left:23.00px;top:397.90px;width:9.60px;height:0.80px;background:#5e5e5e;"></div>
<div style="left:31.50px;top:70.50px;width:1.10px;height:0.70px;background:#6a6a6a;"></div>
<div style="left:31.00px;top:76.05px;width:1.60px;height:0.70px;background:#6a6a6a;"></div>
<div style="left:31.50px;top:81.60px;width:1.10px;height:0.70px;background:#6a6a6a;"></div>
<div style="left:31.50px;top:92.70px;width:1.10px;height:0.70px;background:#6a6a6a;"></div>
<div style="left:31.00px;top:98.25px;width:1.60px;height:0.70px;background:#6a6a6a;"></div>
<div style="left:31.50px;top:103.80px;width:1.10px;height:0.70px;background:#6a6a6a;"></div>
<div style="left:31.50px;top:114.90px;width:1.10px;height:0.70px;background:#6a6a6a;"></div>
<div style="left:31.00px;top:120.45px;width:1.60px;height:0.70px;background:#6a6a6a;"></div>
<div style="left:31.50px;top:126.00px;width:1.10px;height:0.70px;background:#6a6a6a;"></div>
<div style="left:31.50px;top:137.10px;width:1.10px;height:0.70px;background:#6a6a6a;"></div>
<div style="left:31.00px;top:142.65px;width:1.60px;height:0.70px;background:#6a6a6a;"></div>
<div style="left:31.50px;top:148.20px;width:1.10px;height:0.70px;background:#6a6a6a;"></div>
<div style="left:31.50px;top:159.30px;width:1.10px;height:0.70px;background:#6a6a6a;"></div>
<div style="left:31.00px;top:164.85px;width:1.60px;height:0.70px;background:#6a6a6a;"></div>
<div style="left:31.50px;top:170.40px;width:1.10px;height:0.70px;background:#6a6a6a;"></div>
<div style="left:31.50px;top:181.50px;width:1.10px;height:0.70px;background:#6a6a6a;"></div>
<div style="left:31.00px;top:187.05px;width:1.60px;height:0.70px;background:#6a6a6a;"></div>
<div style="left:31.50px;top:192.60px;width:1.10px;height:0.70px;background:#6a6a6a;"></div>
<div style="left:31.50px;top:203.70px;width:1.10px;height:0.70px;background:#6a6a6a;"></div>
<div style="left:31.00px;top:209.25px;width:1.60px;height:0.70px;background:#6a6a6a;"></div>
<div style="left:31.50px;top:214.80px;width:1.10px;height:0.70px;background:#6a6a6a;"></div>
<div style="left:31.50px;top:225.90px;width:1.10px;height:0.70px;background:#6a6a6a;"></div>
<div style="left:31.00px;top:231.45px;width:1.60px;height:0.70px;background:#6a6a6a;"></div>
<div style="left:31.50px;top:237.00px;width:1.10px;height:0.70px;background:#6a6a6a;"></div>
<div style="left:31.50px;top:248.10px;width:1.10px;height:0.70px;background:#6a6a6a;"></div>
<div style="left:31.00px;top:253.65px;width:1.60px;height:0.70px;background:#6a6a6a;"></div>
<div style="left:31.50px;top:259.20px;width:1.10px;height:0.70px;background:#6a6a6a;"></div>
<div style="left:31.50px;top:270.30px;width:1.10px;height:0.70px;background:#6a6a6a;"></div>
<div style="left:31.00px;top:275.85px;width:1.60px;height:0.70px;background:#6a6a6a;"></div>
<div style="left:31.50px;top:281.40px;width:1.10px;height:0.70px;background:#6a6a6a;"></div>
<div style="left:31.50px;top:292.50px;width:1.10px;height:0.70px;background:#6a6a6a;"></div>
<div style="left:31.00px;top:298.05px;width:1.60px;height:0.70px;background:#6a6a6a;"></div>
<div style="left:31.50px;top:303.60px;width:1.10px;height:0.70px;background:#6a6a6a;"></div>
<div style="left:31.50px;top:314.70px;width:1.10px;height:0.70px;background:#6a6a6a;"></div>
<div style="left:31.00px;top:320.25px;width:1.60px;height:0.70px;background:#6a6a6a;"></div>
<div style="left:31.50px;top:325.80px;width:1.10px;height:0.70px;background:#6a6a6a;"></div>
<div style="left:31.50px;top:336.90px;width:1.10px;height:0.70px;background:#6a6a6a;"></div>
<div style="left:31.00px;top:342.45px;width:1.60px;height:0.70px;background:#6a6a6a;"></div>
<div style="left:31.50px;top:348.00px;width:1.10px;height:0.70px;background:#6a6a6a;"></div>
<div style="left:31.50px;top:359.10px;width:1.10px;height:0.70px;background:#6a6a6a;"></div>
<div style="left:31.00px;top:364.65px;width:1.60px;height:0.70px;background:#6a6a6a;"></div>
<div style="left:31.50px;top:370.20px;width:1.10px;height:0.70px;background:#6a6a6a;"></div>
<div style="left:31.50px;top:381.30px;width:1.10px;height:0.70px;background:#6a6a6a;"></div>
<div style="left:31.00px;top:386.85px;width:1.60px;height:0.70px;background:#6a6a6a;"></div>
<div style="left:31.50px;top:392.40px;width:1.10px;height:0.70px;background:#6a6a6a;"></div>
<div style="left:600.50px;top:51.80px;width:9.80px;height:356.20px;background:#4b4b4b;"></div>
<div style="left:610.30px;top:35.00px;width:1.70px;height:373.00px;background:#3e3e3e;"></div>
<div style="left:23.00px;top:399.80px;width:577.50px;height:8.20px;background:#4b4b4b;"></div>
<div style="left:23.00px;top:399.80px;width:24.30px;height:8.20px;background:#434343;"></div>
<div style="left:152.80px;top:399.80px;width:447.70px;height:8.20px;background:#454545;"></div>
<span class="t" style="left:27.00px;top:401.51px;font-size:6.60px;color:#dcdcdc;font-family:'Liberation Sans',sans-serif;transform:scaleX(0.8223);transform-origin:0 0;">16.67%</span>
<span class="t" style="left:74.00px;top:401.51px;font-size:6.60px;color:#cfcfcf;font-family:'Liberation Sans',sans-serif;transform:scaleX(0.8341);transform-origin:0 0;">Doc: 24.9M/518.2M</span>
<svg style="left:148px;top:401.3px" width="3" height="6" viewBox="0 0 3 6"><path d="M0.4 0.4L2.4 3L0.4 5.6" fill="none" stroke="#c8c8c8" stroke-width="0.8"/></svg>
<div style="left:200.00px;top:65.60px;width:233.20px;height:329.50px;background:#ffffff;"></div>
<div style="left:214.60px;top:79.40px;width:203.20px;height:301.40px;background:#efefef;background:radial-gradient(ellipse 200px 187px at 50% 50%, #f4f4f4 0%, #f1f1f1 50%, #e5e5e5 78%, #dadada 100%);"></div>
<div style="left:224.70px;top:96.00px;width:28.70px;height:28.00px;background:#f0c24f;"></div>
<div style="left:226.80px;top:98.10px;width:24.50px;height:23.80px;background:#e5476b;"></div>
<svg style="left:232.50px;top:101.50px" width="13" height="16" viewBox="0 0 13 16"><path d="M1 1.2Q1 0.6 1.6 0.6H8L12 4.6V14.4Q12 15 11.4 15H1.6Q1 15 1 14.4Z" fill="none" stroke="#fff" stroke-width="1.3"/><path d="M5.3 7.2L7 6.2V12.3" fill="none" stroke="#fff" stroke-width="1.2"/></svg>
<span class="t" style="left:257.50px;top:105.69px;font-size:25.20px;color:#e44d72;font-family:'Liberation Sans',sans-serif;font-weight:bold;transform:scale(0.3125,0.3333);transform-origin:0 0;-webkit-text-stroke:0;">Every page is page one</span>
<span class="t" style="left:257.00px;top:122.57px;font-size:15.00px;color:#404040;font-family:'Liberation Sans',sans-serif;transform:scale(0.2907,0.3333);transform-origin:0 0;-webkit-text-stroke:0;">In the field of technical writing, the traditional format has often been printed</span>
<span class="t" style="left:257.00px;top:129.87px;font-size:15.00px;color:#404040;font-family:'Liberation Sans',sans-serif;transform:scale(0.2729,0.3333);transform-origin:0 0;-webkit-text-stroke:0;">user manuals. We carry these assumptions with us into the online world.</span>
<span class="t" style="left:257.00px;top:144.87px;font-size:15.00px;color:#404040;font-family:'Liberation Sans',sans-serif;transform:scale(0.2760,0.3333);transform-origin:0 0;-webkit-text-stroke:0;">Web-based knowledge bases mean your users can be landing on your content</span>
<span class="t" style="left:257.00px;top:152.27px;font-size:15.00px;color:#404040;font-family:'Liberation Sans',sans-serif;transform:scale(0.2694,0.3333);transform-origin:0 0;-webkit-text-stroke:0;">at any point, helping so any content better for your readers. Users to evaluate on</span>
<span class="t" style="left:257.00px;top:159.77px;font-size:15.00px;color:#404040;font-family:'Liberation Sans',sans-serif;transform:scale(0.3000,0.3333);transform-origin:0 0;-webkit-text-stroke:0;">and share. We may sometimes our sites as though the user is hitting the</span>
<span class="t" style="left:257.00px;top:167.17px;font-size:15.00px;color:#404040;font-family:'Liberation Sans',sans-serif;transform:scale(0.2701,0.3333);transform-origin:0 0;-webkit-text-stroke:0;">homepage &#8211; when the reality is they can enter on almost any page.</span>
<span class="t" style="left:257.00px;top:182.37px;font-size:15.00px;color:#404040;font-family:'Liberation Sans',sans-serif;transform:scale(0.2637,0.3333);transform-origin:0 0;-webkit-text-stroke:0;">That&#8217;s why you should consider sites are ideas of a &#8216;chronological&#8217; sequence like a</span>
<span class="t" style="left:257.00px;top:189.77px;font-size:15.00px;color:#404040;font-family:'Liberation Sans',sans-serif;transform:scale(0.2667,0.3333);transform-origin:0 0;-webkit-text-stroke:0;">book, and imagine your knowledge base to more as being as a cloud.</span>
<span class="t" style="left:257.00px;top:204.57px;font-size:15.00px;color:#404040;font-family:'Liberation Sans',sans-serif;transform:scale(0.2731,0.3333);transform-origin:0 0;-webkit-text-stroke:0;">You have to treat every page like it could be &#8216;page one&#8217; for your users. Tell them</span>
<span class="t" style="left:257.00px;top:211.97px;font-size:15.00px;color:#404040;font-family:'Liberation Sans',sans-serif;transform:scale(0.2754,0.3333);transform-origin:0 0;-webkit-text-stroke:0;">where they are, what level of depth the content is at, and where they should go</span>
<span class="t" style="left:257.00px;top:219.37px;font-size:15.00px;color:#404040;font-family:'Liberation Sans',sans-serif;transform:scale(0.2840,0.3333);transform-origin:0 0;-webkit-text-stroke:0;">next if this content is not for them.</span>
<span class="t" style="left:257.00px;top:234.57px;font-size:15.00px;color:#404040;font-family:'Liberation Sans',sans-serif;transform:scale(0.2728,0.3333);transform-origin:0 0;-webkit-text-stroke:0;">This approach relies on clever interlinking to other content and sections. Mozilla</span>
<span class="t" style="left:257.00px;top:241.87px;font-size:15.00px;color:#404040;font-family:'Liberation Sans',sans-serif;transform:scale(0.2776,0.3333);transform-origin:0 0;-webkit-text-stroke:0;">embodies it with their signposting and treating every page as page one in their</span>
<span class="t" style="left:257.00px;top:249.37px;font-size:15.00px;color:#404040;font-family:'Liberation Sans',sans-serif;transform:scale(0.2727,0.3333);transform-origin:0 0;-webkit-text-stroke:0;">knowledge base.</span>
<div style="left:221.20px;top:275.20px;width:189.80px;height:97.40px;background:#ffffff;border:3.9px solid #a8dbe6;box-sizing:border-box;"></div>
<div style="left:231.40px;top:283.80px;width:36.20px;height:8.00px;background:#111;"></div>
<svg style="left:232.50px;top:284.60px" width="7" height="6.5" viewBox="0 0 7 6.5"><path d="M0.5 3Q0.5 0.6 3.5 0.6Q6.5 0.6 6.5 3.2Q6.5 5.5 4 5.6L1 6Z" fill="#fff"/></svg>
<span class="t" style="left:240.50px;top:284.72px;font-size:10.20px;color:#fff;font-family:'Liberation Sans',sans-serif;transform:scale(0.3569,0.3333);transform-origin:0 0;-webkit-text-stroke:0;">MDN Web Docs</span>
<span class="t" style="left:240.50px;top:288.76px;font-size:9.00px;color:#ddd;font-family:'Liberation Sans',sans-serif;transform:scale(0.3388,0.3333);transform-origin:0 0;-webkit-text-stroke:0;">moz://a</span>
<span class="t" style="left:269.00px;top:286.79px;font-size:9.60px;color:#555;font-family:'Liberation Sans',sans-serif;transform:scale(0.2670,0.3333);transform-origin:0 0;-webkit-text-stroke:0;">Technologies &#9662;</span>
<span class="t" style="left:292.00px;top:286.79px;font-size:9.60px;color:#555;font-family:'Liberation Sans',sans-serif;transform:scale(0.2832,0.3333);transform-origin:0 0;-webkit-text-stroke:0;">References &amp; Guides &#9662;</span>
<span class="t" style="left:324.00px;top:286.79px;font-size:9.60px;color:#555;font-family:'Liberation Sans',sans-serif;transform:scale(0.2610,0.3333);transform-origin:0 0;-webkit-text-stroke:0;">Feedback &#9662;</span>
<div style="left:230.60px;top:295.80px;width:171.10px;height:17.50px;background:#f1f5f7;"></div>
<svg style="left:232.80px;top:300.00px" width="7" height="9" viewBox="0 0 7 9"><rect x="0.3" y="0.3" width="6.4" height="8.4" rx="0.5" fill="#888"/><rect x="1.5" y="1.2" width="4.2" height="5" fill="#ddd"/></svg>
<span class="t" style="left:246.00px;top:299.94px;font-size:25.80px;color:#333;font-family:'Liberation Serif',serif;font-weight:bold;transform:scale(0.3119,0.3333);transform-origin:0 0;-webkit-text-stroke:0;">Learn web development</span>
<span class="t" style="left:391.50px;top:302.72px;font-size:10.20px;color:#666;font-family:'Liberation Sans',sans-serif;transform:scale(0.3278,0.3333);transform-origin:0 0;-webkit-text-stroke:0;">Skip</span>
<div style="left:285.00px;top:317.80px;width:110.00px;height:0.80px;background:#7fcde2;"></div>
<span class="t" style="left:285.00px;top:322.70px;font-size:11.70px;color:#3a3a3a;font-family:'Liberation Sans',sans-serif;transform:scale(0.2907,0.3333);transform-origin:0 0;-webkit-text-stroke:0;">Welcome to the MDN Learning Area. This set of articles aims to provide</span>
<span class="t" style="left:285.00px;top:327.40px;font-size:11.70px;color:#3a3a3a;font-family:'Liberation Sans',sans-serif;transform:scale(0.2815,0.3333);transform-origin:0 0;-webkit-text-stroke:0;">complete beginners to web development with all that they need to start</span>
<span class="t" style="left:285.00px;top:332.10px;font-size:11.70px;color:#3a3a3a;font-family:'Liberation Sans',sans-serif;transform:scale(0.2916,0.3333);transform-origin:0 0;-webkit-text-stroke:0;">coding simple websites.</span>
<div style="left:285.00px;top:339.40px;width:110.00px;height:0.60px;background:#b9e0ec;"></div>
<span class="t" style="left:286.40px;top:343.69px;font-size:9.60px;color:#4a4a4a;font-family:'Liberation Sans',sans-serif;transform:scale(0.2888,0.3333);transform-origin:0 0;-webkit-text-stroke:0;">The aim of this area of MDN is not to take you from “beginner” to “expert” but to take you</span>
<span class="t" style="left:285.00px;top:347.49px;font-size:9.60px;color:#4a4a4a;font-family:'Liberation Sans',sans-serif;transform:scale(0.2729,0.3333);transform-origin:0 0;-webkit-text-stroke:0;">from “beginner” to “comfortable.” From there, you should be able to start making your own way,</span>
<span class="t" style="left:285.00px;top:351.49px;font-size:9.60px;color:#4a4a4a;font-family:'Liberation Sans',sans-serif;transform:scale(0.3359,0.3333);transform-origin:0 0;-webkit-text-stroke:0;">learning from the rest of MDN, and other intermediate to advanced resources</span>
<span class="t" style="left:285.00px;top:355.49px;font-size:9.60px;color:#4a4a4a;font-family:'Liberation Sans',sans-serif;transform:scale(0.2818,0.3333);transform-origin:0 0;-webkit-text-stroke:0;">that assume a lot of previous knowledge.</span>
<div style="left:345.00px;top:352.20px;width:18.00px;height:1.40px;background:rgba(59,127,181,0.35);"></div>
<span class="t" style="left:233.20px;top:318.51px;font-size:9.90px;color:#333;font-family:'Liberation Sans',sans-serif;font-weight:bold;transform:scale(0.2848,0.3333);transform-origin:0 0;-webkit-text-stroke:0;">Related Topics</span>
<span class="t" style="left:233.00px;top:326.19px;font-size:9.60px;color:#2f7ab8;font-family:'Liberation Sans',sans-serif;transform:scale(0.2581,0.3333);transform-origin:0 0;-webkit-text-stroke:0;">Complete beginners start here!</span>
<div style="left:233.40px;top:331.00px;width:0.90px;height:0.90px;background:#444;"></div>
<span class="t" style="left:236.20px;top:329.69px;font-size:9.60px;color:#444;font-family:'Liberation Sans',sans-serif;transform:scale(0.2212,0.3333);transform-origin:0 0;-webkit-text-stroke:0;">Getting started with the web</span>
<span class="t" style="left:233.00px;top:335.49px;font-size:9.60px;color:#2f7ab8;font-family:'Liberation Sans',sans-serif;transform:scale(0.2675,0.3333);transform-origin:0 0;-webkit-text-stroke:0;">HTML — Structuring the web</span>
<div style="left:233.40px;top:340.80px;width:0.90px;height:0.90px;background:#444;"></div>
<span class="t" style="left:236.20px;top:339.49px;font-size:9.60px;color:#444;font-family:'Liberation Sans',sans-serif;transform:scale(0.2802,0.3333);transform-origin:0 0;-webkit-text-stroke:0;">Introduction to HTML</span>
<div style="left:233.40px;top:344.60px;width:0.90px;height:0.90px;background:#444;"></div>
<span class="t" style="left:236.20px;top:343.29px;font-size:9.60px;color:#444;font-family:'Liberation Sans',sans-serif;transform:scale(0.2587,0.3333);transform-origin:0 0;-webkit-text-stroke:0;">Multimedia and embedding</span>
<div style="left:233.40px;top:348.30px;width:0.90px;height:0.90px;background:#444;"></div>
<span class="t" style="left:236.20px;top:346.99px;font-size:9.60px;color:#444;font-family:'Liberation Sans',sans-serif;transform:scale(0.2480,0.3333);transform-origin:0 0;-webkit-text-stroke:0;">HTML tables</span>
<div style="left:233.40px;top:352.10px;width:0.90px;height:0.90px;background:#444;"></div>
<span class="t" style="left:236.20px;top:350.79px;font-size:9.60px;color:#444;font-family:'Liberation Sans',sans-serif;transform:scale(0.2556,0.3333);transform-origin:0 0;-webkit-text-stroke:0;">HTML forms</span>
<span class="t" style="left:233.00px;top:357.09px;font-size:9.60px;color:#2f7ab8;font-family:'Liberation Sans',sans-serif;transform:scale(0.2487,0.3333);transform-origin:0 0;-webkit-text-stroke:0;">CSS — Styling the web</span>
<div style="left:233.40px;top:362.10px;width:0.90px;height:0.90px;background:#444;"></div>
<span class="t" style="left:236.20px;top:360.79px;font-size:9.60px;color:#444;font-family:'Liberation Sans',sans-serif;transform:scale(0.2452,0.3333);transform-origin:0 0;-webkit-text-stroke:0;">Introduction to CSS</span>
<div style="left:612.00px;top:35.00px;width:156.00px;height:7.00px;background:#434343;"></div>
<div style="left:612.00px;top:42.00px;width:20.00px;height:366.00px;background:#535353;"></div>
<div style="left:632.00px;top:42.00px;width:2.00px;height:366.00px;background:#3e3e3e;"></div>
<div style="left:634.00px;top:42.00px;width:134.00px;height:366.00px;background:#535353;"></div>
<svg style="left:624.80px;top:37.20px" width="4.8" height="2.9" viewBox="0 0 4.8 2.9"><path d="M0 1.45L2.3 0V2.9Z M2.5 1.45L4.8 0V2.9Z" fill="#d8d8d8"/></svg>
<svg style="left:760.00px;top:37.20px" width="4.8" height="2.9" viewBox="0 0 4.8 2.9"><path d="M0 0V2.9L2.3 1.45Z M2.5 0V2.9L4.8 1.45Z" fill="#d8d8d8"/></svg>
<div style="left:612.00px;top:79.50px;width:20.00px;height:1.10px;background:#3e3e3e;"></div>
<div style="left:612.00px;top:103.30px;width:20.00px;height:1.10px;background:#3e3e3e;"></div>
<div style="left:612.00px;top:141.90px;width:20.00px;height:1.10px;background:#3e3e3e;"></div>
<div style="left:612.00px;top:180.80px;width:20.00px;height:1.10px;background:#3e3e3e;"></div>
<div style="left:612.00px;top:204.30px;width:20.00px;height:1.10px;background:#3e3e3e;"></div>
<div style="left:612.00px;top:242.00px;width:20.00px;height:1.10px;background:#3e3e3e;"></div>
<div style="left:617.00px;top:44.70px;width:10.00px;height:0.70px;background:#4a4a4a;"></div>
<div style="left:617.00px;top:83.50px;width:10.00px;height:0.70px;background:#4a4a4a;"></div>
<div style="left:617.00px;top:107.50px;width:10.00px;height:0.70px;background:#4a4a4a;"></div>
<div style="left:617.00px;top:146.00px;width:10.00px;height:0.70px;background:#4a4a4a;"></div>
<div style="left:617.00px;top:185.00px;width:10.00px;height:0.70px;background:#4a4a4a;"></div>
<div style="left:617.00px;top:208.50px;width:10.00px;height:0.70px;background:#4a4a4a;"></div>
<svg style="left:617.50px;top:50.50px" width="10" height="9.5" viewBox="0 0 10 9.5"><circle cx="2.6" cy="2.8" r="2.2" fill="none" stroke="#e8e8e8" stroke-width="0.9"/><rect x="7.4" y="0.8" width="2" height="1.6" fill="#e8e8e8"/><rect x="7.4" y="3.5" width="2" height="1.6" fill="#e8e8e8"/><rect x="0.4" y="7" width="9" height="2.2" fill="#e8e8e8"/></svg>
<svg style="left:617.00px;top:65.80px" width="10.4" height="10.4" viewBox="0 0 10.4 10.4"><circle cx="5.2" cy="5.2" r="4.6" fill="none" stroke="#e8e8e8" stroke-width="0.9"/><rect x="4.65" y="4.5" width="1.1" height="3.8" fill="#e8e8e8"/><circle cx="5.2" cy="3" r="0.7" fill="#e8e8e8"/></svg>
<svg style="left:617.30px;top:89.00px" width="11.5" height="11" viewBox="0 0 11.5 11"><path d="M0.6 0.8H4.8L10.8 10.2H6.6Z" fill="none" stroke="#e8e8e8" stroke-width="0.8"/><path d="M3.2 2.2Q1.6 2.2 1.8 3.4Q2.2 4.4 3.3 4.6Q4.3 5 3.6 6H1.6" fill="none" stroke="#e8e8e8" stroke-width="0.8"/><path d="M7.4 4.5V9.3M7.4 4.5H8.8Q9.8 4.5 9.8 5.6Q9.8 6.8 8.6 6.8H7.4M8.6 6.8Q10 6.8 10 8Q10 9.3 8.8 9.3H7.4" fill="none" stroke="#e8e8e8" stroke-width="0.8"/></svg>
<svg style="left:617.50px;top:111.00px" width="9" height="12.5" viewBox="0 0 9 12.5"><rect x="2.6" y="7" width="4.3" height="5.2" fill="#e8e8e8"/><path d="M3.4 7L1.5 2.5M4.8 7V1.3M6.2 7L7.6 2.6" stroke="#e8e8e8" stroke-width="0.8"/><ellipse cx="1.5" cy="2.3" rx="1" ry="1.6" fill="#e8e8e8"/><ellipse cx="4.8" cy="1.3" rx="0.8" ry="1.3" fill="#e8e8e8"/><ellipse cx="7.6" cy="2.4" rx="1" ry="1.3" fill="#e8e8e8"/></svg>
<svg style="left:617.00px;top:129.20px" width="11" height="8.6" viewBox="0 0 11 8.6"><rect x="2" y="1.1" width="9" height="0.9" fill="#e8e8e8"/><circle cx="2.2" cy="1.5" r="1.3" fill="#e8e8e8"/><rect x="0.5" y="5.8" width="7" height="1" fill="#e8e8e8"/><path d="M7 6.3L10.8 4.2V8.4Z" fill="#e8e8e8"/></svg>
<span class="t" style="left:617.50px;top:152.30px;font-size:8.50px;color:#e8e8e8;font-family:'Liberation Sans',sans-serif;transform:scaleX(1.1460);transform-origin:0 0;-webkit-text-stroke:0;">A</span>
<div style="left:625.50px;top:151.50px;width:0.80px;height:8.50px;background:#e8e8e8;"></div>
<span class="t" style="left:618.50px;top:166.88px;font-size:9.00px;color:#e8e8e8;font-family:'Liberation Sans',sans-serif;font-weight:bold;transform:scaleX(1.1963);transform-origin:0 0;-webkit-text-stroke:0;">&#182;</span>
<span class="t" style="left:617.50px;top:190.00px;font-size:11.00px;color:#e8e8e8;font-family:'Liberation Serif',serif;font-weight:bold;font-style:italic;transform:scaleX(1.1574);transform-origin:0 0;-webkit-text-stroke:0;">A</span>
<svg style="left:617.00px;top:212.50px" width="10" height="10" viewBox="0 0 10 10"><rect x="0.8" y="0.5" width="3" height="2.4" fill="none" stroke="#e8e8e8" stroke-width="0.7"/><rect x="0.8" y="3.6" width="3" height="2.4" fill="none" stroke="#e8e8e8" stroke-width="0.7"/><rect x="0.8" y="6.8" width="3" height="2.8" fill="#e8e8e8"/><path d="M6 1.6Q9 2.5 8.5 5.5Q8 8.3 5.8 8.8" fill="none" stroke="#e8e8e8" stroke-width="0.9"/><path d="M5.5 0.5L7 1.8L5.5 3Z" fill="#e8e8e8"/></svg>
<svg style="left:619.00px;top:229.50px" width="7.5" height="8.5" viewBox="0 0 7.5 8.5"><path d="M0.5 0.3L7.2 4.2L0.5 8.2Z" fill="#e8e8e8"/></svg>
<div style="left:634.00px;top:42.00px;width:134.00px;height:15.60px;background:#434343;"></div>
<div style="left:634.00px;top:42.50px;width:25.00px;height:15.10px;background:#535353;"></div>
<div style="left:659.00px;top:42.50px;width:0.80px;height:15.10px;background:#3c3c3c;"></div>
<div style="left:694.00px;top:42.50px;width:0.80px;height:15.10px;background:#3c3c3c;"></div>
<span class="t" style="left:639.00px;top:46.96px;font-size:6.90px;color:#f2f2f2;font-family:'Liberation Sans',sans-serif;font-weight:bold;transform:scaleX(0.7944);transform-origin:0 0;">Color</span>
<span class="t" style="left:663.80px;top:46.96px;font-size:6.90px;color:#bdbdbd;font-family:'Liberation Sans',sans-serif;transform:scaleX(0.8201);transform-origin:0 0;">Swatches</span>
<div style="left:759.00px;top:47.60px;width:5.50px;height:4.00px;background:#8e8e8e;"></div>
<div style="left:759.00px;top:48.80px;width:5.50px;height:0.40px;background:#6a6a6a;"></div>
<div style="left:759.00px;top:50.10px;width:5.50px;height:0.40px;background:#6a6a6a;"></div>
<div style="left:659.40px;top:61.60px;width:79.60px;height:160.00px;background:#000;background:linear-gradient(to bottom, rgba(0,0,0,0) 0%, rgba(0,0,0,0.42) 50%, rgba(0,0,0,0.8) 82%, #000 100%), linear-gradient(to right, #fff, #04a4f6);"></div>
<div style="left:748.00px;top:61.80px;width:11.00px;height:159.80px;background:#f00;background:linear-gradient(to bottom, #ff0000 0%, #ff00ff 16.67%, #0000ff 33.33%, #00ffff 50%, #00ff00 66.67%, #ffff00 83.33%, #ff0000 100%);"></div>
<svg style="left:710.5px;top:69px" width="7" height="7" viewBox="0 0 7 7"><circle cx="3.5" cy="3.5" r="2.7" fill="none" stroke="#1a3a50" stroke-width="0.9"/></svg>
<svg style="left:742.50px;top:128.00px" width="4" height="4.5" viewBox="0 0 4 4.5"><path d="M0.3 0.3L3.7 2.25L0.3 4.2Z" fill="#e8e8e8"/></svg>
<div style="left:644.90px;top:69.50px;width:10.60px;height:10.60px;background:#3fa9ec;border:0.8px solid #363636;box-sizing:border-box;"></div>
<div style="left:639.60px;top:64.00px;width:10.50px;height:10.30px;background:#ffffff;border:0.5px solid #d0d0d0;box-sizing:border-box;"></div>
<svg style="left:638.50px;top:93.60px" width="7" height="6.5" viewBox="0 0 7 6.5"><path d="M3.5 0.3L6.8 6.2H0.2Z" fill="#e8e8e8"/><rect x="3.1" y="2.2" width="0.8" height="2.2" fill="#333"/><rect x="3.1" y="4.9" width="0.8" height="0.8" fill="#333"/></svg>
<div style="left:647.80px;top:93.30px;width:6.50px;height:6.60px;background:#47a8ec;border:0.6px solid #ddd;box-sizing:border-box;"></div>
<div style="left:634.00px;top:224.60px;width:134.00px;height:1.60px;background:#3e3e3e;"></div>
<div style="left:634.00px;top:226.20px;width:134.00px;height:16.00px;background:#434343;"></div>
<div style="left:634.00px;top:226.50px;width:26.40px;height:15.70px;background:#535353;"></div>
<div style="left:660.40px;top:226.50px;width:0.80px;height:15.70px;background:#3c3c3c;"></div>
<div style="left:693.70px;top:226.50px;width:0.80px;height:15.70px;background:#3c3c3c;"></div>
<div style="left:719.20px;top:226.50px;width:0.80px;height:15.70px;background:#3c3c3c;"></div>
<span class="t" style="left:638.80px;top:231.86px;font-size:6.90px;color:#f2f2f2;font-family:'Liberation Sans',sans-serif;font-weight:bold;transform:scaleX(0.7286);transform-origin:0 0;">Layers</span>
<span class="t" style="left:665.70px;top:231.86px;font-size:6.90px;color:#bdbdbd;font-family:'Liberation Sans',sans-serif;transform:scaleX(0.7931);transform-origin:0 0;">Channels</span>
<span class="t" style="left:700.00px;top:231.86px;font-size:6.90px;color:#bdbdbd;font-family:'Liberation Sans',sans-serif;transform:scaleX(0.8113);transform-origin:0 0;">Paths</span>
<div style="left:759.00px;top:232.00px;width:6.00px;height:4.50px;background:#8e8e8e;"></div>
<div style="left:759.00px;top:233.40px;width:6.00px;height:0.40px;background:#6a6a6a;"></div>
<div style="left:759.00px;top:234.80px;width:6.00px;height:0.40px;background:#6a6a6a;"></div>
<div style="left:636.90px;top:248.40px;width:49.00px;height:8.60px;background:#464646;border:0.6px solid #3c3c3c;box-sizing:border-box;"></div>
<svg style="left:639.70px;top:249.00px" width="7" height="7" viewBox="0 0 7 7"><circle cx="4.4" cy="2.6" r="2.1" fill="none" stroke="#e6e6e6" stroke-width="0.9"/><path d="M2.9 4.1L0.5 6.5" stroke="#e6e6e6" stroke-width="1.1"/></svg>
<span class="t" style="left:648.60px;top:249.86px;font-size:6.90px;color:#e6e6e6;font-family:'Liberation Sans',sans-serif;transform:scaleX(0.8118);transform-origin:0 0;">Kind</span>
<svg style="left:680.50px;top:251.50px" width="5" height="3" viewBox="0 0 5 3"><path d="M0.3 0.3L2.5 2.5L4.7 0.3" fill="none" stroke="#b8b8b8" stroke-width="0.8"/></svg>
<svg style="left:692.00px;top:248.80px" width="8" height="7" viewBox="0 0 8 7"><rect x="0.5" y="0.5" width="7" height="6" fill="none" stroke="#e8e8e8" stroke-width="0.8"/><path d="M1.5 5.5L3.5 3L5 4.5L6.5 3.5V5.5Z" fill="#e8e8e8"/></svg>
<svg style="left:705.80px;top:248.80px" width="7.2" height="7.2" viewBox="0 0 7.2 7.2"><circle cx="3.6" cy="3.6" r="3" fill="none" stroke="#e8e8e8" stroke-width="0.9"/><path d="M1.5 5.7L5.7 1.5A3 3 0 0 1 5.7 5.7Z" fill="#e8e8e8"/></svg>
<span class="t" style="left:719.50px;top:248.16px;font-size:8.80px;color:#e8e8e8;font-family:'Liberation Serif',serif;font-weight:bold;transform:scaleX(1.2766);transform-origin:0 0;-webkit-text-stroke:0;">T</span>
<svg style="left:733.00px;top:248.50px" width="8" height="8" viewBox="0 0 8 8"><rect x="1.5" y="1.5" width="5" height="5" fill="none" stroke="#e8e8e8" stroke-width="0.9"/><rect x="0.3" y="0.3" width="2" height="2" fill="#e8e8e8"/><rect x="5.7" y="0.3" width="2" height="2" fill="#e8e8e8"/><rect x="0.3" y="5.7" width="2" height="2" fill="#e8e8e8"/><rect x="5.7" y="5.7" width="2" height="2" fill="#e8e8e8"/></svg>
<svg style="left:746.80px;top:248.50px" width="7.5" height="8.5" viewBox="0 0 7.5 8.5"><path d="M1 0.5H4.5L6.8 2.8V8H1Z" fill="none" stroke="#e8e8e8" stroke-width="0.9"/><rect x="0.5" y="4.5" width="3.5" height="3.5" fill="#e8e8e8"/></svg>
<div style="left:761.20px;top:250.50px;width:5.50px;height:7.30px;background:#3c3c3c;border-radius:2.7px;"></div>
<svg style="left:761px;top:247.5px" width="6" height="6" viewBox="0 0 6 6"><circle cx="3" cy="3" r="2.6" fill="#f0f0f0"/></svg>
<div style="left:636.90px;top:263.00px;width:72.50px;height:9.00px;background:#4e4e4e;border:0.6px solid #484848;box-sizing:border-box;"></div>
<span class="t" style="left:640.80px;top:265.16px;font-size:6.90px;color:#858585;font-family:'Liberation Sans',sans-serif;transform:scaleX(0.8191);transform-origin:0 0;">Normal</span>
<svg style="left:703.50px;top:266.50px" width="5" height="3" viewBox="0 0 5 3"><path d="M0.3 0.3L2.5 2.5L4.7 0.3" fill="none" stroke="#7a7a7a" stroke-width="0.8"/></svg>
<span class="t" style="left:714.00px;top:265.16px;font-size:6.90px;color:#858585;font-family:'Liberation Sans',sans-serif;transform:scaleX(0.7911);transform-origin:0 0;">Opacity:</span>
<div style="left:737.00px;top:263.00px;width:28.00px;height:9.00px;background:#4e4e4e;border-bottom:0.6px solid #5e5e5e;box-sizing:border-box;"></div>
<span class="t" style="left:739.40px;top:265.16px;font-size:6.90px;color:#7a7a7a;font-family:'Liberation Sans',sans-serif;transform:scaleX(0.7716);transform-origin:0 0;">100%</span>
<svg style="left:761.00px;top:266.50px" width="4.5" height="3" viewBox="0 0 4.5 3"><path d="M0.3 0.3L2.2 2.3L4.2 0.3" fill="none" stroke="#707070" stroke-width="0.7"/></svg>
<span class="t" style="left:637.50px;top:280.06px;font-size:6.90px;color:#858585;font-family:'Liberation Sans',sans-serif;transform:scaleX(0.7340);transform-origin:0 0;">Lock:</span>
<svg style="left:656.00px;top:279.80px" width="6" height="6" viewBox="0 0 6 6"><rect x="0.4" y="0.4" width="5.2" height="5.2" fill="none" stroke="#bcbcbc" stroke-width="0.7"/><rect x="1.4" y="1.4" width="1.6" height="1.6" fill="#bcbcbc"/><rect x="3" y="3" width="1.6" height="1.6" fill="#bcbcbc"/></svg>
<svg style="left:667.70px;top:278.80px" width="7" height="7.5" viewBox="0 0 7 7.5"><path d="M6.5 0.5L2.5 4.5" stroke="#bcbcbc" stroke-width="1"/><path d="M2.6 4.3Q1.2 4.2 0.8 5.6Q0.6 6.8 0.2 7.2Q2.5 7.2 3.2 6Q3.6 5 2.6 4.3Z" fill="#bcbcbc"/></svg>
<svg style="left:680.50px;top:279.00px" width="7" height="7" viewBox="0 0 7 7"><path d="M3.5 0.2L4.6 1.5H3.9V3.1H5.5V2.4L6.8 3.5L5.5 4.6V3.9H3.9V5.5H4.6L3.5 6.8L2.4 5.5H3.1V3.9H1.5V4.6L0.2 3.5L1.5 2.4V3.1H3.1V1.5H2.4Z" fill="#bcbcbc"/></svg>
<svg style="left:693.00px;top:279.00px" width="7" height="7" viewBox="0 0 7 7"><rect x="1.2" y="1.2" width="4.6" height="4.6" fill="none" stroke="#bcbcbc" stroke-width="0.7"/><rect x="0.2" y="0.2" width="1.6" height="1.6" fill="#bcbcbc"/><rect x="5.2" y="0.2" width="1.6" height="1.6" fill="#bcbcbc"/><rect x="0.2" y="5.2" width="1.6" height="1.6" fill="#bcbcbc"/><rect x="5.2" y="5.2" width="1.6" height="1.6" fill="#bcbcbc"/></svg>
<svg style="left:706.00px;top:278.80px" width="6" height="7.5" viewBox="0 0 6 7.5"><path d="M1.3 3.3V2.2Q1.3 0.5 3 0.5Q4.7 0.5 4.7 2.2V3.3" fill="none" stroke="#bcbcbc" stroke-width="0.8"/><rect x="0.3" y="3.3" width="5.4" height="4" fill="#bcbcbc"/></svg>
<span class="t" style="left:726.50px;top:280.06px;font-size:6.90px;color:#858585;font-family:'Liberation Sans',sans-serif;transform:scaleX(0.6997);transform-origin:0 0;">Fill:</span>
<div style="left:737.00px;top:278.00px;width:28.00px;height:9.00px;background:#535353;border-bottom:0.6px solid #5e5e5e;box-sizing:border-box;"></div>
<span class="t" style="left:739.40px;top:280.06px;font-size:6.90px;color:#7a7a7a;font-family:'Liberation Sans',sans-serif;transform:scaleX(0.7716);transform-origin:0 0;">100%</span>
<svg style="left:761.00px;top:281.50px" width="4.5" height="3" viewBox="0 0 4.5 3"><path d="M0.3 0.3L2.2 2.3L4.2 0.3" fill="none" stroke="#707070" stroke-width="0.7"/></svg>
<div style="left:634.00px;top:289.30px;width:134.00px;height:0.80px;background:#444;"></div>
<div style="left:634.00px;top:290.00px;width:126.40px;height:105.00px;background:#535353;"></div>
<div style="left:634.00px;top:295.35px;width:126.40px;height:0.90px;background:#474747;"></div>
<div style="left:675.50px;top:290.40px;width:1.00px;height:1.20px;background:#bdbdbd;"></div>
<div style="left:681.50px;top:290.60px;width:2.20px;height:1.10px;background:#bdbdbd;"></div>
<div style="left:638.80px;top:290.00px;width:6.60px;height:2.20px;background:transparent;border:0.6px solid #626262;border-top:0;box-sizing:border-box;"></div>
<div style="left:651.40px;top:289.80px;width:0.80px;height:6.00px;background:#484848;"></div>
<div style="left:634.00px;top:308.15px;width:126.40px;height:0.90px;background:#474747;"></div>
<div style="left:639.40px;top:298.33px;width:6.50px;height:6.50px;background:transparent;border:0.6px solid #626262;box-sizing:border-box;"></div>
<div style="left:651.40px;top:295.80px;width:0.80px;height:12.85px;background:#484848;"></div>
<svg style="left:654.00px;top:299.62px" width="3" height="5.2" viewBox="0 0 3 5.2"><path d="M0.4 0.4L2.4 2.6L0.4 4.8" fill="none" stroke="#c8c8c8" stroke-width="0.7"/></svg>
<svg style="left:659.90px;top:298.33px" width="8.2" height="6.4" viewBox="0 0 8.2 6.4"><path d="M0 1.2Q0 0.3 0.8 0.3H3.2L4 1.3H7.8Q8.6 1.3 8.6 2V6.3H0Z" fill="#ececec"/></svg>
<span class="t" style="left:674.90px;top:299.98px;font-size:6.90px;color:#e6e6e6;font-family:'Liberation Sans',sans-serif;transform:scaleX(0.8266);transform-origin:0 0;">page 14</span>
<div style="left:634.00px;top:320.95px;width:126.40px;height:0.90px;background:#474747;"></div>
<div style="left:639.40px;top:311.13px;width:6.50px;height:6.50px;background:transparent;border:0.6px solid #626262;box-sizing:border-box;"></div>
<div style="left:651.40px;top:308.60px;width:0.80px;height:12.85px;background:#484848;"></div>
<svg style="left:654.00px;top:312.43px" width="3" height="5.2" viewBox="0 0 3 5.2"><path d="M0.4 0.4L2.4 2.6L0.4 4.8" fill="none" stroke="#c8c8c8" stroke-width="0.7"/></svg>
<svg style="left:659.90px;top:311.13px" width="8.2" height="6.4" viewBox="0 0 8.2 6.4"><path d="M0 1.2Q0 0.3 0.8 0.3H3.2L4 1.3H7.8Q8.6 1.3 8.6 2V6.3H0Z" fill="#ececec"/></svg>
<span class="t" style="left:674.90px;top:312.78px;font-size:6.90px;color:#e6e6e6;font-family:'Liberation Sans',sans-serif;transform:scaleX(0.8266);transform-origin:0 0;">page 13</span>
<div style="left:634.00px;top:333.75px;width:126.40px;height:0.90px;background:#474747;"></div>
<div style="left:639.40px;top:323.93px;width:6.50px;height:6.50px;background:transparent;border:0.6px solid #626262;box-sizing:border-box;"></div>
<div style="left:651.40px;top:321.40px;width:0.80px;height:12.85px;background:#484848;"></div>
<svg style="left:654.00px;top:325.22px" width="3" height="5.2" viewBox="0 0 3 5.2"><path d="M0.4 0.4L2.4 2.6L0.4 4.8" fill="none" stroke="#c8c8c8" stroke-width="0.7"/></svg>
<svg style="left:659.90px;top:323.93px" width="8.2" height="6.4" viewBox="0 0 8.2 6.4"><path d="M0 1.2Q0 0.3 0.8 0.3H3.2L4 1.3H7.8Q8.6 1.3 8.6 2V6.3H0Z" fill="#ececec"/></svg>
<span class="t" style="left:674.90px;top:325.58px;font-size:6.90px;color:#e6e6e6;font-family:'Liberation Sans',sans-serif;transform:scaleX(0.8266);transform-origin:0 0;">page 12</span>
<div style="left:634.00px;top:346.55px;width:126.40px;height:0.90px;background:#474747;"></div>
<div style="left:639.40px;top:336.73px;width:6.50px;height:6.50px;background:transparent;border:0.6px solid #626262;box-sizing:border-box;"></div>
<div style="left:651.40px;top:334.20px;width:0.80px;height:12.85px;background:#484848;"></div>
<svg style="left:654.00px;top:338.02px" width="3" height="5.2" viewBox="0 0 3 5.2"><path d="M0.4 0.4L2.4 2.6L0.4 4.8" fill="none" stroke="#c8c8c8" stroke-width="0.7"/></svg>
<svg style="left:659.90px;top:336.73px" width="8.2" height="6.4" viewBox="0 0 8.2 6.4"><path d="M0 1.2Q0 0.3 0.8 0.3H3.2L4 1.3H7.8Q8.6 1.3 8.6 2V6.3H0Z" fill="#ececec"/></svg>
<span class="t" style="left:674.90px;top:338.38px;font-size:6.90px;color:#e6e6e6;font-family:'Liberation Sans',sans-serif;transform:scaleX(0.8440);transform-origin:0 0;">page 11</span>
<div style="left:634.00px;top:359.45px;width:126.40px;height:0.90px;background:#474747;"></div>
<div style="left:639.40px;top:349.63px;width:6.50px;height:6.50px;background:transparent;border:0.6px solid #626262;box-sizing:border-box;"></div>
<div style="left:651.40px;top:347.10px;width:0.80px;height:12.85px;background:#484848;"></div>
<svg style="left:654.00px;top:350.93px" width="3" height="5.2" viewBox="0 0 3 5.2"><path d="M0.4 0.4L2.4 2.6L0.4 4.8" fill="none" stroke="#c8c8c8" stroke-width="0.7"/></svg>
<svg style="left:659.90px;top:349.63px" width="8.2" height="6.4" viewBox="0 0 8.2 6.4"><path d="M0 1.2Q0 0.3 0.8 0.3H3.2L4 1.3H7.8Q8.6 1.3 8.6 2V6.3H0Z" fill="#ececec"/></svg>
<span class="t" style="left:674.90px;top:351.28px;font-size:6.90px;color:#e6e6e6;font-family:'Liberation Sans',sans-serif;transform:scaleX(0.8266);transform-origin:0 0;">page 10</span>
<div style="left:634.00px;top:372.25px;width:126.40px;height:0.90px;background:#474747;"></div>
<svg style="left:638.30px;top:364.12px" width="9" height="5.6" viewBox="0 0 9 5.6"><path d="M0.5 2.8Q4.5 -1 8.5 2.8Q4.5 6.6 0.5 2.8Z" fill="none" stroke="#ececec" stroke-width="0.95"/><circle cx="4.5" cy="2.8" r="1.45" fill="#ececec"/></svg>
<div style="left:651.40px;top:359.90px;width:0.80px;height:12.85px;background:#484848;"></div>
<svg style="left:654.00px;top:363.72px" width="3" height="5.2" viewBox="0 0 3 5.2"><path d="M0.4 0.4L2.4 2.6L0.4 4.8" fill="none" stroke="#c8c8c8" stroke-width="0.7"/></svg>
<svg style="left:659.90px;top:362.43px" width="8.2" height="6.4" viewBox="0 0 8.2 6.4"><path d="M0 1.2Q0 0.3 0.8 0.3H3.2L4 1.3H7.8Q8.6 1.3 8.6 2V6.3H0Z" fill="#ececec"/></svg>
<span class="t" style="left:674.90px;top:364.08px;font-size:6.90px;color:#e6e6e6;font-family:'Liberation Sans',sans-serif;transform:scaleX(0.7591);transform-origin:0 0;">page 9</span>
<div style="left:651.80px;top:372.90px;width:108.60px;height:22.00px;background:#6a6a6a;"></div>
<svg style="left:638.30px;top:381.30px" width="9" height="5.6" viewBox="0 0 9 5.6"><path d="M0.5 2.8Q4.5 -1 8.5 2.8Q4.5 6.6 0.5 2.8Z" fill="none" stroke="#ececec" stroke-width="0.95"/><circle cx="4.5" cy="2.8" r="1.45" fill="#ececec"/></svg>
<div style="left:651.40px;top:372.90px;width:0.80px;height:22.00px;background:#484848;"></div>
<div style="left:653.40px;top:375.00px;width:13.10px;height:17.40px;background:#ffffff;border:0.6px solid #3a3a3a;box-sizing:border-box;"></div>
<svg style="left:652.00px;top:373.60px" width="16" height="20" viewBox="0 0 16 20"><path d="M0.45 3V0.45H3M13 0.45H15.55V3M15.55 17V19.55H13M3 19.55H0.45V17" fill="none" stroke="#f0f0f0" stroke-width="0.9"/></svg>
<span class="t" style="left:672.60px;top:381.16px;font-size:6.90px;color:#e8e8e8;font-family:'Liberation Sans',sans-serif;font-style:italic;transform:scaleX(0.8428);transform-origin:0 0;">Background</span>
<svg style="left:744.00px;top:379.80px" width="6.5" height="8" viewBox="0 0 6.5 8"><path d="M1.5 3.5V2.3Q1.5 0.6 3.25 0.6Q5 0.6 5 2.3V3.5" fill="none" stroke="#d8d8d8" stroke-width="0.8"/><rect x="0.5" y="3.5" width="5.5" height="4" fill="none" stroke="#d8d8d8" stroke-width="0.8"/></svg>
<div style="left:760.40px;top:290.00px;width:7.60px;height:105.00px;background:#4a4a4a;"></div>
<div style="left:760.80px;top:332.00px;width:6.80px;height:53.80px;background:#626262;"></div>
<svg style="left:761.50px;top:295.50px" width="5" height="3" viewBox="0 0 5 3"><path d="M0.4 2.6L2.5 0.5L4.6 2.6" fill="none" stroke="#8a8a8a" stroke-width="0.7"/></svg>
<svg style="left:761.50px;top:388.00px" width="5" height="3" viewBox="0 0 5 3"><path d="M0.4 0.4L2.5 2.5L4.6 0.4" fill="none" stroke="#8a8a8a" stroke-width="0.7"/></svg>
<div style="left:634.00px;top:394.80px;width:134.00px;height:13.20px;background:#535353;"></div>
<div style="left:634.00px;top:394.80px;width:134.00px;height:0.80px;background:#474747;"></div>
<svg style="left:654.50px;top:399.60px" width="7" height="4.5" viewBox="0 0 7 4.5"><rect x="0.4" y="0.6" width="3.4" height="3.2" rx="1.6" fill="none" stroke="#8a8a8a" stroke-width="0.7"/><rect x="3.2" y="0.6" width="3.4" height="3.2" rx="1.6" fill="none" stroke="#8a8a8a" stroke-width="0.7"/></svg>
<span class="t" style="left:669.50px;top:398.36px;font-size:7.00px;color:#8a8a8a;font-family:'Liberation Serif',serif;font-style:italic;transform:scaleX(1.3827);transform-origin:0 0;">fx</span>
<svg style="left:684.50px;top:398.30px" width="7" height="6.5" viewBox="0 0 7 6.5"><rect x="0" y="0" width="7" height="6.5" fill="#e8e8e8"/><circle cx="3.5" cy="3.25" r="1.8" fill="#3a3a3a"/></svg>
<svg style="left:700.30px;top:398.20px" width="7" height="7" viewBox="0 0 7 7"><circle cx="3.5" cy="3.5" r="3" fill="none" stroke="#e8e8e8" stroke-width="0.8"/><path d="M1.4 5.6L5.6 1.4A3 3 0 0 1 5.6 5.6Z" fill="#e8e8e8"/></svg>
<svg style="left:714.50px;top:398.50px" width="8" height="6.2" viewBox="0 0 8 6.2"><path d="M0 1Q0 0.2 0.8 0.2H3L3.7 1.1H7.5Q8 1.1 8 1.7V6.2H0Z" fill="#e8e8e8"/></svg>
<svg style="left:730.30px;top:398.30px" width="7" height="7" viewBox="0 0 7 7"><path d="M2 0.5H6.5V5.5" fill="none" stroke="#e8e8e8" stroke-width="0.9"/><rect x="0.5" y="2" width="4.5" height="4.5" fill="none" stroke="#e8e8e8" stroke-width="0.7"/></svg>
<svg style="left:745.50px;top:398.60px" width="6.5" height="7.5" viewBox="0 0 6.5 7.5"><path d="M0 1.3H6.5M2 1.3V0.3H4.5V1.3" fill="none" stroke="#e8e8e8" stroke-width="0.7"/><path d="M0.8 2.1H5.7L5.2 7.3H1.3Z" fill="#e8e8e8"/><path d="M2.3 3V6.5M3.25 3V6.5M4.2 3V6.5" stroke="#535353" stroke-width="0.4"/></svg>
<div style="left:760.40px;top:395.00px;width:7.60px;height:13.00px;background:#535353;"></div>
</body></html>
